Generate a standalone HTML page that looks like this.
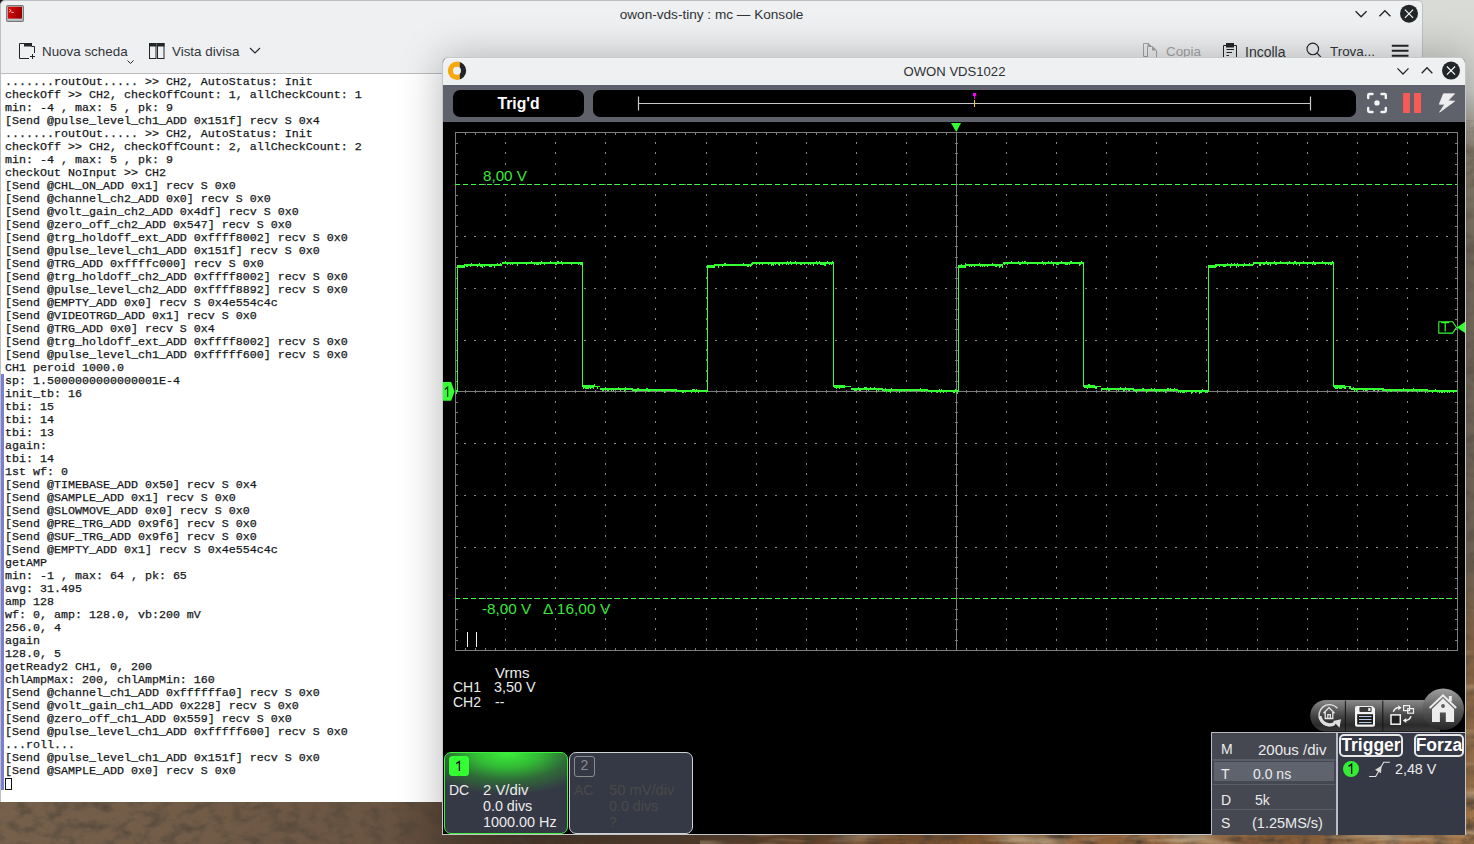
<!DOCTYPE html>
<html><head><meta charset="utf-8">
<style>
*{box-sizing:border-box}
html,body{margin:0;padding:0}
body{width:1474px;height:844px;overflow:hidden;position:relative;font-family:"Liberation Sans",sans-serif;background:#b9a58c}
.a{position:absolute;white-space:pre}
#wall{left:0;top:0;width:1474px;height:844px;
 background:linear-gradient(180deg,#d9dbd6 0px,#d2d4cf 90px,#8f8574 150px,#7b7061 260px,#776b5c 560px,#8c6a4c 640px,#a47850 760px,#a8784c 844px)}
#wallb{left:0;top:801px;width:1474px;height:43px;
 background:linear-gradient(90deg,#76604c 0px,#725c48 200px,#6a5442 380px,#4c3a2c 520px,#5a4230 700px,#7a5232 860px,#96663c 1000px,#a87448 1150px,#9a6c44 1300px,#b08050 1474px)}
#konsole{left:0;top:0;width:1423px;height:802px;background:#eff0f1;border-radius:5px 5px 0 0;overflow:hidden;border:1px solid #bdbfc2;border-bottom:none}
.tb{font-size:13.4px;color:#31363b;top:43px}
#term{left:0;top:73px;width:1422px;height:728px;background:#fff}
#term pre{margin:0;position:absolute;left:4px;top:2px;font-family:"Liberation Mono",monospace;font-size:11.67px;line-height:13px;color:#15181a;-webkit-text-stroke:0.25px #15181a}
#shadow{left:443px;top:57px;width:1022px;height:778px;border-radius:6px 6px 0 0;box-shadow:0 3px 40px 3px rgba(0,0,0,0.27)}
#osc{left:442px;top:57px;width:1024px;height:778px;background:#000;border:1px solid #c4c6c8;border-top-color:#c6c7c9;border-radius:6px 6px 0 0;overflow:hidden}
.g{color:#39e639;font-size:14.3px}
.w{color:#ececec;font-size:14px}
</style></head><body>
<div class="a" id="wall"></div>
<div class="a" id="wallb"></div>
<div class="a" style="left:0;top:0;width:6px;height:6px;background:#1a1414"></div>
<svg class="a" style="left:0;top:0" width="1474" height="844">
 <filter id="tex" x="0" y="0" width="100%" height="100%"><feTurbulence type="fractalNoise" baseFrequency="0.06 0.09" numOctaves="4" seed="5"/><feColorMatrix type="matrix" values="0 0 0 0 0.08  0 0 0 0 0.06  0 0 0 0 0.04  -2.2 0 0 0 1.25"/></filter>
 <filter id="tex2" x="0" y="0" width="100%" height="100%"><feTurbulence type="fractalNoise" baseFrequency="0.012 0.09" numOctaves="3" seed="9"/><feColorMatrix type="matrix" values="0 0 0 0 0.95  0 0 0 0 0.75  0 0 0 0 0.5  2.6 0 0 0 -1.25"/></filter>
 <rect x="0" y="795" width="1474" height="49" filter="url(#tex)" opacity="0.85"/>
 <rect x="1462" y="120" width="12" height="724" filter="url(#tex)" opacity="0.45"/>
 <rect x="700" y="830" width="774" height="14" filter="url(#tex2)" opacity="0.6"/>
 <rect x="1462" y="600" width="12" height="244" filter="url(#tex2)" opacity="0.5"/>
</svg>

<!-- ============ KONSOLE ============ -->
<div class="a" id="konsole">
  <div class="a" style="left:0;top:6px;width:1421px;text-align:center;font-size:13.6px;color:#2f3438">owon-vds-tiny : mc — Konsole</div>
  <div class="a tb" style="left:41px">Nuova scheda</div>
  <div class="a tb" style="left:171px">Vista divisa</div>
  <div class="a tb" style="left:1165px;color:#a4a7aa">Copia</div>
  <div class="a tb" style="left:1244px;font-size:14px">Incolla</div>
  <div class="a tb" style="left:1329px">Trova...</div>
  <div class="a" style="left:0;top:72px;width:1423px;height:1px;background:#b9bbbe"></div>
  <div class="a" id="term"><pre>.......routOut..... &gt;&gt; CH2, AutoStatus: Init
checkOff &gt;&gt; CH2, checkOffCount: 1, allCheckCount: 1
min: -4 , max: 5 , pk: 9
[Send @pulse_level_ch1_ADD 0x151f] recv S 0x4
.......routOut..... &gt;&gt; CH2, AutoStatus: Init
checkOff &gt;&gt; CH2, checkOffCount: 2, allCheckCount: 2
min: -4 , max: 5 , pk: 9
checkOut NoInput &gt;&gt; CH2
[Send @CHL_ON_ADD 0x1] recv S 0x0
[Send @channel_ch2_ADD 0x0] recv S 0x0
[Send @volt_gain_ch2_ADD 0x4df] recv S 0x0
[Send @zero_off_ch2_ADD 0x547] recv S 0x0
[Send @trg_holdoff_ext_ADD 0xffff8002] recv S 0x0
[Send @pulse_level_ch1_ADD 0x151f] recv S 0x0
[Send @TRG_ADD 0xffffc000] recv S 0x0
[Send @trg_holdoff_ch2_ADD 0xffff8002] recv S 0x0
[Send @pulse_level_ch2_ADD 0xffff8892] recv S 0x0
[Send @EMPTY_ADD 0x0] recv S 0x4e554c4c
[Send @VIDEOTRGD_ADD 0x1] recv S 0x0
[Send @TRG_ADD 0x0] recv S 0x4
[Send @trg_holdoff_ext_ADD 0xffff8002] recv S 0x0
[Send @pulse_level_ch1_ADD 0xfffff600] recv S 0x0
CH1 peroid 1000.0
sp: 1.5000000000000001E-4
init_tb: 16
tbi: 15
tbi: 14
tbi: 13
again:
tbi: 14
1st wf: 0
[Send @TIMEBASE_ADD 0x50] recv S 0x4
[Send @SAMPLE_ADD 0x1] recv S 0x0
[Send @SLOWMOVE_ADD 0x0] recv S 0x0
[Send @PRE_TRG_ADD 0x9f6] recv S 0x0
[Send @SUF_TRG_ADD 0x9f6] recv S 0x0
[Send @EMPTY_ADD 0x1] recv S 0x4e554c4c
getAMP
min: -1 , max: 64 , pk: 65
avg: 31.495
amp 128
wf: 0, amp: 128.0, vb:200 mV
256.0, 4
again
128.0, 5
getReady2 CH1, 0, 200
chlAmpMax: 200, chlAmpMin: 160
[Send @channel_ch1_ADD 0xffffffa0] recv S 0x0
[Send @volt_gain_ch1_ADD 0x228] recv S 0x0
[Send @zero_off_ch1_ADD 0x559] recv S 0x0
[Send @pulse_level_ch1_ADD 0xfffff600] recv S 0x0
...roll...
[Send @pulse_level_ch1_ADD 0x151f] recv S 0x0
[Send @SAMPLE_ADD 0x0] recv S 0x0</pre></div>
  <div class="a" style="left:0;top:373px;width:3px;height:416px;background:#7b7fd4"></div>
  <div class="a" style="left:4px;top:777px;width:7px;height:12px;border:1.2px solid #111"></div>
</div>

<svg class="a" style="left:0;top:0" width="1474" height="844">
 <!-- konsole title icon -->
 <defs><linearGradient id="kred" x1="0" y1="0" x2="1" y2="0.3"><stop offset="0" stop-color="#e80a0a"/><stop offset="1" stop-color="#9a0000"/></linearGradient></defs>
 <rect x="6.6" y="5.6" width="16.8" height="15.8" rx="1.2" fill="#c4c8c8" stroke="#7a7a7a" stroke-width="1.1"/>
 <rect x="7.8" y="6.8" width="14.2" height="11.8" fill="url(#kred)"/>
 <path d="M9.2 9.2L11.2 10.6L9.2 12M11.4 12.4H13.8" stroke="#fff" stroke-width="0.9" fill="none" opacity="0.9"/>
 <!-- titlebar buttons -->
 <path d="M1355.6 11.3L1361.1 16.8L1366.6 11.3" stroke="#232629" stroke-width="1.3" fill="none"/>
 <path d="M1379.4 16.2L1384.9 10.7L1390.4 16.2" stroke="#232629" stroke-width="1.3" fill="none"/>
 <circle cx="1409" cy="13.7" r="9" fill="#232629"/>
 <path d="M1404.9 9.6L1413.1 17.8M1413.1 9.6L1404.9 17.8" stroke="#fff" stroke-width="1.1"/>
 <!-- new tab icon 16x16 at 19,43 -->
 <g transform="translate(19,43)" fill="none" stroke="#232629" stroke-width="1">
  <path d="M10 15.5H0.5V0.5H5"/>
  <rect x="5" y="0" width="8" height="3.5" fill="#232629" stroke="none"/>
  <path d="M12.5 3.5H15.5V10"/>
  <path d="M13.5 11V16M11 13.5H16"/>
 </g>
 <path d="M127.5 60.5L130.5 63.5L133.5 60.5" stroke="#232629" stroke-width="1" fill="none"/>
 <!-- split view icon at 149,43 -->
 <g transform="translate(149,43)" fill="none" stroke="#232629" stroke-width="1">
  <rect x="0.5" y="0.5" width="6.5" height="15"/>
  <rect x="8.5" y="0.5" width="6.5" height="15"/>
  <rect x="0" y="0" width="7.5" height="3.5" fill="#232629" stroke="none"/>
  <rect x="8" y="0" width="7.5" height="3.5" fill="#232629" stroke="none"/>
 </g>
 <path d="M250 48L255 53L260 48" stroke="#232629" stroke-width="1.1" fill="none"/>
 <!-- copy icon (disabled) -->
 <g fill="none" stroke="#a3a6a9" stroke-width="1">
  <path d="M1148 56.5H1143.5V43.5H1148.5L1149 44"/>
  <path d="M1147.5 57V46.5H1152.5L1156.5 50.5V57"/>
  <path d="M1148.5 43.5L1151 46" />
 </g>
 <path d="M1152 46.5V50.5H1156.3Z" fill="#a3a6a9"/>
 <path d="M1148.5 43.5L1152 46.5H1147.5V44Z" fill="#a3a6a9"/>
 <!-- paste icon -->
 <g fill="none" stroke="#232629" stroke-width="1">
  <path d="M1223.5 57.5V45.5H1226M1234 45.5H1236.5V57.5"/>
  <path d="M1226.5 49.5H1234M1226.5 52.5H1232M1226.5 55.5H1229"/>
 </g>
 <rect x="1226" y="43" width="8" height="4.5" fill="#232629"/>
 <!-- search -->
 <circle cx="1312.8" cy="48.9" r="5.8" fill="none" stroke="#232629" stroke-width="1.15"/>
 <path d="M1317 53.1L1320.8 56.9" stroke="#232629" stroke-width="1.3"/>
 <!-- hamburger -->
 <path d="M1391.8 45.8H1408.5M1391.8 50.7H1408.5M1391.8 55.7H1408.5" stroke="#232629" stroke-width="1.9"/>
</svg>


<!-- ============ OSC WINDOW ============ -->
<div class="a" id="shadow"></div>
<div class="a" id="osc">
  <div class="a" style="left:0;top:0;width:1024px;height:27px;background:#eff0f1;border-top:1px solid #f4f5f6"></div>
  <div class="a" style="left:0;top:6px;width:1023px;text-align:center;font-size:13.1px;color:#2b3034">OWON VDS1022</div>
  <div class="a" style="left:0;top:27px;width:1024px;height:37px;background:#5f626b"></div>
  <div class="a" style="left:10px;top:32px;width:131px;height:27px;background:#000;border-radius:7px"></div>
  <div class="a" style="left:10px;top:37px;width:131px;text-align:center;color:#fff;font-weight:bold;font-size:15.7px">Trig'd</div>
  <div class="a" style="left:150px;top:32px;width:763px;height:27px;background:#000;border-radius:7px"></div>
</div>
<svg width="1474" height="844" style="position:absolute;left:0;top:0">
<path d="M455 132h1003v1h-1003zM455 650h1003v1h-1003zM455 132h1v519h-1zM1457 132h1v519h-1zM956 132h1v518h-1zM455 391h1002v1h-1002zM465 133h1v2h-1zM465 648h1v2h-1zM465 390h1v3h-1zM475 133h1v2h-1zM475 648h1v2h-1zM475 390h1v3h-1zM485 133h1v2h-1zM485 648h1v2h-1zM485 390h1v3h-1zM495 133h1v2h-1zM495 648h1v2h-1zM495 390h1v3h-1zM505 133h1v2h-1zM505 648h1v2h-1zM505 390h1v3h-1zM515 133h1v2h-1zM515 648h1v2h-1zM515 390h1v3h-1zM525 133h1v2h-1zM525 648h1v2h-1zM525 390h1v3h-1zM535 133h1v2h-1zM535 648h1v2h-1zM535 390h1v3h-1zM545 133h1v2h-1zM545 648h1v2h-1zM545 390h1v3h-1zM555 133h1v2h-1zM555 648h1v2h-1zM555 390h1v3h-1zM565 133h1v2h-1zM565 648h1v2h-1zM565 390h1v3h-1zM575 133h1v2h-1zM575 648h1v2h-1zM575 390h1v3h-1zM585 133h1v2h-1zM585 648h1v2h-1zM585 390h1v3h-1zM595 133h1v2h-1zM595 648h1v2h-1zM595 390h1v3h-1zM605 133h1v2h-1zM605 648h1v2h-1zM605 390h1v3h-1zM615 133h1v2h-1zM615 648h1v2h-1zM615 390h1v3h-1zM625 133h1v2h-1zM625 648h1v2h-1zM625 390h1v3h-1zM635 133h1v2h-1zM635 648h1v2h-1zM635 390h1v3h-1zM645 133h1v2h-1zM645 648h1v2h-1zM645 390h1v3h-1zM655 133h1v2h-1zM655 648h1v2h-1zM655 390h1v3h-1zM665 133h1v2h-1zM665 648h1v2h-1zM665 390h1v3h-1zM675 133h1v2h-1zM675 648h1v2h-1zM675 390h1v3h-1zM685 133h1v2h-1zM685 648h1v2h-1zM685 390h1v3h-1zM695 133h1v2h-1zM695 648h1v2h-1zM695 390h1v3h-1zM706 133h1v2h-1zM706 648h1v2h-1zM706 390h1v3h-1zM716 133h1v2h-1zM716 648h1v2h-1zM716 390h1v3h-1zM726 133h1v2h-1zM726 648h1v2h-1zM726 390h1v3h-1zM736 133h1v2h-1zM736 648h1v2h-1zM736 390h1v3h-1zM746 133h1v2h-1zM746 648h1v2h-1zM746 390h1v3h-1zM756 133h1v2h-1zM756 648h1v2h-1zM756 390h1v3h-1zM766 133h1v2h-1zM766 648h1v2h-1zM766 390h1v3h-1zM776 133h1v2h-1zM776 648h1v2h-1zM776 390h1v3h-1zM786 133h1v2h-1zM786 648h1v2h-1zM786 390h1v3h-1zM796 133h1v2h-1zM796 648h1v2h-1zM796 390h1v3h-1zM806 133h1v2h-1zM806 648h1v2h-1zM806 390h1v3h-1zM816 133h1v2h-1zM816 648h1v2h-1zM816 390h1v3h-1zM826 133h1v2h-1zM826 648h1v2h-1zM826 390h1v3h-1zM836 133h1v2h-1zM836 648h1v2h-1zM836 390h1v3h-1zM846 133h1v2h-1zM846 648h1v2h-1zM846 390h1v3h-1zM856 133h1v2h-1zM856 648h1v2h-1zM856 390h1v3h-1zM866 133h1v2h-1zM866 648h1v2h-1zM866 390h1v3h-1zM876 133h1v2h-1zM876 648h1v2h-1zM876 390h1v3h-1zM886 133h1v2h-1zM886 648h1v2h-1zM886 390h1v3h-1zM896 133h1v2h-1zM896 648h1v2h-1zM896 390h1v3h-1zM906 133h1v2h-1zM906 648h1v2h-1zM906 390h1v3h-1zM916 133h1v2h-1zM916 648h1v2h-1zM916 390h1v3h-1zM926 133h1v2h-1zM926 648h1v2h-1zM926 390h1v3h-1zM936 133h1v2h-1zM936 648h1v2h-1zM936 390h1v3h-1zM946 133h1v2h-1zM946 648h1v2h-1zM946 390h1v3h-1zM956 133h1v2h-1zM956 648h1v2h-1zM956 390h1v3h-1zM966 133h1v2h-1zM966 648h1v2h-1zM966 390h1v3h-1zM976 133h1v2h-1zM976 648h1v2h-1zM976 390h1v3h-1zM986 133h1v2h-1zM986 648h1v2h-1zM986 390h1v3h-1zM996 133h1v2h-1zM996 648h1v2h-1zM996 390h1v3h-1zM1006 133h1v2h-1zM1006 648h1v2h-1zM1006 390h1v3h-1zM1016 133h1v2h-1zM1016 648h1v2h-1zM1016 390h1v3h-1zM1026 133h1v2h-1zM1026 648h1v2h-1zM1026 390h1v3h-1zM1036 133h1v2h-1zM1036 648h1v2h-1zM1036 390h1v3h-1zM1046 133h1v2h-1zM1046 648h1v2h-1zM1046 390h1v3h-1zM1056 133h1v2h-1zM1056 648h1v2h-1zM1056 390h1v3h-1zM1066 133h1v2h-1zM1066 648h1v2h-1zM1066 390h1v3h-1zM1076 133h1v2h-1zM1076 648h1v2h-1zM1076 390h1v3h-1zM1086 133h1v2h-1zM1086 648h1v2h-1zM1086 390h1v3h-1zM1096 133h1v2h-1zM1096 648h1v2h-1zM1096 390h1v3h-1zM1106 133h1v2h-1zM1106 648h1v2h-1zM1106 390h1v3h-1zM1116 133h1v2h-1zM1116 648h1v2h-1zM1116 390h1v3h-1zM1126 133h1v2h-1zM1126 648h1v2h-1zM1126 390h1v3h-1zM1136 133h1v2h-1zM1136 648h1v2h-1zM1136 390h1v3h-1zM1146 133h1v2h-1zM1146 648h1v2h-1zM1146 390h1v3h-1zM1156 133h1v2h-1zM1156 648h1v2h-1zM1156 390h1v3h-1zM1166 133h1v2h-1zM1166 648h1v2h-1zM1166 390h1v3h-1zM1176 133h1v2h-1zM1176 648h1v2h-1zM1176 390h1v3h-1zM1186 133h1v2h-1zM1186 648h1v2h-1zM1186 390h1v3h-1zM1196 133h1v2h-1zM1196 648h1v2h-1zM1196 390h1v3h-1zM1206 133h1v2h-1zM1206 648h1v2h-1zM1206 390h1v3h-1zM1217 133h1v2h-1zM1217 648h1v2h-1zM1217 390h1v3h-1zM1227 133h1v2h-1zM1227 648h1v2h-1zM1227 390h1v3h-1zM1237 133h1v2h-1zM1237 648h1v2h-1zM1237 390h1v3h-1zM1247 133h1v2h-1zM1247 648h1v2h-1zM1247 390h1v3h-1zM1257 133h1v2h-1zM1257 648h1v2h-1zM1257 390h1v3h-1zM1267 133h1v2h-1zM1267 648h1v2h-1zM1267 390h1v3h-1zM1277 133h1v2h-1zM1277 648h1v2h-1zM1277 390h1v3h-1zM1287 133h1v2h-1zM1287 648h1v2h-1zM1287 390h1v3h-1zM1297 133h1v2h-1zM1297 648h1v2h-1zM1297 390h1v3h-1zM1307 133h1v2h-1zM1307 648h1v2h-1zM1307 390h1v3h-1zM1317 133h1v2h-1zM1317 648h1v2h-1zM1317 390h1v3h-1zM1327 133h1v2h-1zM1327 648h1v2h-1zM1327 390h1v3h-1zM1337 133h1v2h-1zM1337 648h1v2h-1zM1337 390h1v3h-1zM1347 133h1v2h-1zM1347 648h1v2h-1zM1347 390h1v3h-1zM1357 133h1v2h-1zM1357 648h1v2h-1zM1357 390h1v3h-1zM1367 133h1v2h-1zM1367 648h1v2h-1zM1367 390h1v3h-1zM1377 133h1v2h-1zM1377 648h1v2h-1zM1377 390h1v3h-1zM1387 133h1v2h-1zM1387 648h1v2h-1zM1387 390h1v3h-1zM1397 133h1v2h-1zM1397 648h1v2h-1zM1397 390h1v3h-1zM1407 133h1v2h-1zM1407 648h1v2h-1zM1407 390h1v3h-1zM1417 133h1v2h-1zM1417 648h1v2h-1zM1417 390h1v3h-1zM1427 133h1v2h-1zM1427 648h1v2h-1zM1427 390h1v3h-1zM1437 133h1v2h-1zM1437 648h1v2h-1zM1437 390h1v3h-1zM1447 133h1v2h-1zM1447 648h1v2h-1zM1447 390h1v3h-1zM456 143h2v1h-2zM1455 143h2v1h-2zM955 143h3v1h-3zM456 153h2v1h-2zM1455 153h2v1h-2zM955 153h3v1h-3zM456 164h2v1h-2zM1455 164h2v1h-2zM955 164h3v1h-3zM456 174h2v1h-2zM1455 174h2v1h-2zM955 174h3v1h-3zM456 184h2v1h-2zM1455 184h2v1h-2zM955 184h3v1h-3zM456 195h2v1h-2zM1455 195h2v1h-2zM955 195h3v1h-3zM456 205h2v1h-2zM1455 205h2v1h-2zM955 205h3v1h-3zM456 215h2v1h-2zM1455 215h2v1h-2zM955 215h3v1h-3zM456 226h2v1h-2zM1455 226h2v1h-2zM955 226h3v1h-3zM456 236h2v1h-2zM1455 236h2v1h-2zM955 236h3v1h-3zM456 246h2v1h-2zM1455 246h2v1h-2zM955 246h3v1h-3zM456 257h2v1h-2zM1455 257h2v1h-2zM955 257h3v1h-3zM456 267h2v1h-2zM1455 267h2v1h-2zM955 267h3v1h-3zM456 278h2v1h-2zM1455 278h2v1h-2zM955 278h3v1h-3zM456 288h2v1h-2zM1455 288h2v1h-2zM955 288h3v1h-3zM456 298h2v1h-2zM1455 298h2v1h-2zM955 298h3v1h-3zM456 309h2v1h-2zM1455 309h2v1h-2zM955 309h3v1h-3zM456 319h2v1h-2zM1455 319h2v1h-2zM955 319h3v1h-3zM456 329h2v1h-2zM1455 329h2v1h-2zM955 329h3v1h-3zM456 340h2v1h-2zM1455 340h2v1h-2zM955 340h3v1h-3zM456 350h2v1h-2zM1455 350h2v1h-2zM955 350h3v1h-3zM456 360h2v1h-2zM1455 360h2v1h-2zM955 360h3v1h-3zM456 371h2v1h-2zM1455 371h2v1h-2zM955 371h3v1h-3zM456 381h2v1h-2zM1455 381h2v1h-2zM955 381h3v1h-3zM456 391h2v1h-2zM1455 391h2v1h-2zM955 391h3v1h-3zM456 402h2v1h-2zM1455 402h2v1h-2zM955 402h3v1h-3zM456 412h2v1h-2zM1455 412h2v1h-2zM955 412h3v1h-3zM456 422h2v1h-2zM1455 422h2v1h-2zM955 422h3v1h-3zM456 433h2v1h-2zM1455 433h2v1h-2zM955 433h3v1h-3zM456 443h2v1h-2zM1455 443h2v1h-2zM955 443h3v1h-3zM456 453h2v1h-2zM1455 453h2v1h-2zM955 453h3v1h-3zM456 464h2v1h-2zM1455 464h2v1h-2zM955 464h3v1h-3zM456 474h2v1h-2zM1455 474h2v1h-2zM955 474h3v1h-3zM456 485h2v1h-2zM1455 485h2v1h-2zM955 485h3v1h-3zM456 495h2v1h-2zM1455 495h2v1h-2zM955 495h3v1h-3zM456 505h2v1h-2zM1455 505h2v1h-2zM955 505h3v1h-3zM456 516h2v1h-2zM1455 516h2v1h-2zM955 516h3v1h-3zM456 526h2v1h-2zM1455 526h2v1h-2zM955 526h3v1h-3zM456 536h2v1h-2zM1455 536h2v1h-2zM955 536h3v1h-3zM456 547h2v1h-2zM1455 547h2v1h-2zM955 547h3v1h-3zM456 557h2v1h-2zM1455 557h2v1h-2zM955 557h3v1h-3zM456 567h2v1h-2zM1455 567h2v1h-2zM955 567h3v1h-3zM456 578h2v1h-2zM1455 578h2v1h-2zM955 578h3v1h-3zM456 588h2v1h-2zM1455 588h2v1h-2zM955 588h3v1h-3zM456 598h2v1h-2zM1455 598h2v1h-2zM955 598h3v1h-3zM456 609h2v1h-2zM1455 609h2v1h-2zM955 609h3v1h-3zM456 619h2v1h-2zM1455 619h2v1h-2zM955 619h3v1h-3zM456 629h2v1h-2zM1455 629h2v1h-2zM955 629h3v1h-3zM456 640h2v1h-2zM1455 640h2v1h-2zM955 640h3v1h-3z" fill="#7c7c7c" shape-rendering="crispEdges"/>
<path d="M505 142h1v2h-1zM505 152h1v2h-1zM505 163h1v2h-1zM505 173h1v2h-1zM505 194h1v2h-1zM505 204h1v2h-1zM505 214h1v2h-1zM505 225h1v2h-1zM505 245h1v2h-1zM505 256h1v2h-1zM505 266h1v2h-1zM505 277h1v2h-1zM505 297h1v2h-1zM505 308h1v2h-1zM505 318h1v2h-1zM505 328h1v2h-1zM505 349h1v2h-1zM505 359h1v2h-1zM505 370h1v2h-1zM505 380h1v2h-1zM505 401h1v2h-1zM505 411h1v2h-1zM505 421h1v2h-1zM505 432h1v2h-1zM505 452h1v2h-1zM505 463h1v2h-1zM505 473h1v2h-1zM505 484h1v2h-1zM505 504h1v2h-1zM505 515h1v2h-1zM505 525h1v2h-1zM505 535h1v2h-1zM505 556h1v2h-1zM505 566h1v2h-1zM505 577h1v2h-1zM505 587h1v2h-1zM505 608h1v2h-1zM505 618h1v2h-1zM505 628h1v2h-1zM505 639h1v2h-1zM555 142h1v2h-1zM555 152h1v2h-1zM555 163h1v2h-1zM555 173h1v2h-1zM555 194h1v2h-1zM555 204h1v2h-1zM555 214h1v2h-1zM555 225h1v2h-1zM555 245h1v2h-1zM555 256h1v2h-1zM555 266h1v2h-1zM555 277h1v2h-1zM555 297h1v2h-1zM555 308h1v2h-1zM555 318h1v2h-1zM555 328h1v2h-1zM555 349h1v2h-1zM555 359h1v2h-1zM555 370h1v2h-1zM555 380h1v2h-1zM555 401h1v2h-1zM555 411h1v2h-1zM555 421h1v2h-1zM555 432h1v2h-1zM555 452h1v2h-1zM555 463h1v2h-1zM555 473h1v2h-1zM555 484h1v2h-1zM555 504h1v2h-1zM555 515h1v2h-1zM555 525h1v2h-1zM555 535h1v2h-1zM555 556h1v2h-1zM555 566h1v2h-1zM555 577h1v2h-1zM555 587h1v2h-1zM555 608h1v2h-1zM555 618h1v2h-1zM555 628h1v2h-1zM555 639h1v2h-1zM605 142h1v2h-1zM605 152h1v2h-1zM605 163h1v2h-1zM605 173h1v2h-1zM605 194h1v2h-1zM605 204h1v2h-1zM605 214h1v2h-1zM605 225h1v2h-1zM605 245h1v2h-1zM605 256h1v2h-1zM605 266h1v2h-1zM605 277h1v2h-1zM605 297h1v2h-1zM605 308h1v2h-1zM605 318h1v2h-1zM605 328h1v2h-1zM605 349h1v2h-1zM605 359h1v2h-1zM605 370h1v2h-1zM605 380h1v2h-1zM605 401h1v2h-1zM605 411h1v2h-1zM605 421h1v2h-1zM605 432h1v2h-1zM605 452h1v2h-1zM605 463h1v2h-1zM605 473h1v2h-1zM605 484h1v2h-1zM605 504h1v2h-1zM605 515h1v2h-1zM605 525h1v2h-1zM605 535h1v2h-1zM605 556h1v2h-1zM605 566h1v2h-1zM605 577h1v2h-1zM605 587h1v2h-1zM605 608h1v2h-1zM605 618h1v2h-1zM605 628h1v2h-1zM605 639h1v2h-1zM655 142h1v2h-1zM655 152h1v2h-1zM655 163h1v2h-1zM655 173h1v2h-1zM655 194h1v2h-1zM655 204h1v2h-1zM655 214h1v2h-1zM655 225h1v2h-1zM655 245h1v2h-1zM655 256h1v2h-1zM655 266h1v2h-1zM655 277h1v2h-1zM655 297h1v2h-1zM655 308h1v2h-1zM655 318h1v2h-1zM655 328h1v2h-1zM655 349h1v2h-1zM655 359h1v2h-1zM655 370h1v2h-1zM655 380h1v2h-1zM655 401h1v2h-1zM655 411h1v2h-1zM655 421h1v2h-1zM655 432h1v2h-1zM655 452h1v2h-1zM655 463h1v2h-1zM655 473h1v2h-1zM655 484h1v2h-1zM655 504h1v2h-1zM655 515h1v2h-1zM655 525h1v2h-1zM655 535h1v2h-1zM655 556h1v2h-1zM655 566h1v2h-1zM655 577h1v2h-1zM655 587h1v2h-1zM655 608h1v2h-1zM655 618h1v2h-1zM655 628h1v2h-1zM655 639h1v2h-1zM706 142h1v2h-1zM706 152h1v2h-1zM706 163h1v2h-1zM706 173h1v2h-1zM706 194h1v2h-1zM706 204h1v2h-1zM706 214h1v2h-1zM706 225h1v2h-1zM706 245h1v2h-1zM706 256h1v2h-1zM706 266h1v2h-1zM706 277h1v2h-1zM706 297h1v2h-1zM706 308h1v2h-1zM706 318h1v2h-1zM706 328h1v2h-1zM706 349h1v2h-1zM706 359h1v2h-1zM706 370h1v2h-1zM706 380h1v2h-1zM706 401h1v2h-1zM706 411h1v2h-1zM706 421h1v2h-1zM706 432h1v2h-1zM706 452h1v2h-1zM706 463h1v2h-1zM706 473h1v2h-1zM706 484h1v2h-1zM706 504h1v2h-1zM706 515h1v2h-1zM706 525h1v2h-1zM706 535h1v2h-1zM706 556h1v2h-1zM706 566h1v2h-1zM706 577h1v2h-1zM706 587h1v2h-1zM706 608h1v2h-1zM706 618h1v2h-1zM706 628h1v2h-1zM706 639h1v2h-1zM756 142h1v2h-1zM756 152h1v2h-1zM756 163h1v2h-1zM756 173h1v2h-1zM756 194h1v2h-1zM756 204h1v2h-1zM756 214h1v2h-1zM756 225h1v2h-1zM756 245h1v2h-1zM756 256h1v2h-1zM756 266h1v2h-1zM756 277h1v2h-1zM756 297h1v2h-1zM756 308h1v2h-1zM756 318h1v2h-1zM756 328h1v2h-1zM756 349h1v2h-1zM756 359h1v2h-1zM756 370h1v2h-1zM756 380h1v2h-1zM756 401h1v2h-1zM756 411h1v2h-1zM756 421h1v2h-1zM756 432h1v2h-1zM756 452h1v2h-1zM756 463h1v2h-1zM756 473h1v2h-1zM756 484h1v2h-1zM756 504h1v2h-1zM756 515h1v2h-1zM756 525h1v2h-1zM756 535h1v2h-1zM756 556h1v2h-1zM756 566h1v2h-1zM756 577h1v2h-1zM756 587h1v2h-1zM756 608h1v2h-1zM756 618h1v2h-1zM756 628h1v2h-1zM756 639h1v2h-1zM806 142h1v2h-1zM806 152h1v2h-1zM806 163h1v2h-1zM806 173h1v2h-1zM806 194h1v2h-1zM806 204h1v2h-1zM806 214h1v2h-1zM806 225h1v2h-1zM806 245h1v2h-1zM806 256h1v2h-1zM806 266h1v2h-1zM806 277h1v2h-1zM806 297h1v2h-1zM806 308h1v2h-1zM806 318h1v2h-1zM806 328h1v2h-1zM806 349h1v2h-1zM806 359h1v2h-1zM806 370h1v2h-1zM806 380h1v2h-1zM806 401h1v2h-1zM806 411h1v2h-1zM806 421h1v2h-1zM806 432h1v2h-1zM806 452h1v2h-1zM806 463h1v2h-1zM806 473h1v2h-1zM806 484h1v2h-1zM806 504h1v2h-1zM806 515h1v2h-1zM806 525h1v2h-1zM806 535h1v2h-1zM806 556h1v2h-1zM806 566h1v2h-1zM806 577h1v2h-1zM806 587h1v2h-1zM806 608h1v2h-1zM806 618h1v2h-1zM806 628h1v2h-1zM806 639h1v2h-1zM856 142h1v2h-1zM856 152h1v2h-1zM856 163h1v2h-1zM856 173h1v2h-1zM856 194h1v2h-1zM856 204h1v2h-1zM856 214h1v2h-1zM856 225h1v2h-1zM856 245h1v2h-1zM856 256h1v2h-1zM856 266h1v2h-1zM856 277h1v2h-1zM856 297h1v2h-1zM856 308h1v2h-1zM856 318h1v2h-1zM856 328h1v2h-1zM856 349h1v2h-1zM856 359h1v2h-1zM856 370h1v2h-1zM856 380h1v2h-1zM856 401h1v2h-1zM856 411h1v2h-1zM856 421h1v2h-1zM856 432h1v2h-1zM856 452h1v2h-1zM856 463h1v2h-1zM856 473h1v2h-1zM856 484h1v2h-1zM856 504h1v2h-1zM856 515h1v2h-1zM856 525h1v2h-1zM856 535h1v2h-1zM856 556h1v2h-1zM856 566h1v2h-1zM856 577h1v2h-1zM856 587h1v2h-1zM856 608h1v2h-1zM856 618h1v2h-1zM856 628h1v2h-1zM856 639h1v2h-1zM906 142h1v2h-1zM906 152h1v2h-1zM906 163h1v2h-1zM906 173h1v2h-1zM906 194h1v2h-1zM906 204h1v2h-1zM906 214h1v2h-1zM906 225h1v2h-1zM906 245h1v2h-1zM906 256h1v2h-1zM906 266h1v2h-1zM906 277h1v2h-1zM906 297h1v2h-1zM906 308h1v2h-1zM906 318h1v2h-1zM906 328h1v2h-1zM906 349h1v2h-1zM906 359h1v2h-1zM906 370h1v2h-1zM906 380h1v2h-1zM906 401h1v2h-1zM906 411h1v2h-1zM906 421h1v2h-1zM906 432h1v2h-1zM906 452h1v2h-1zM906 463h1v2h-1zM906 473h1v2h-1zM906 484h1v2h-1zM906 504h1v2h-1zM906 515h1v2h-1zM906 525h1v2h-1zM906 535h1v2h-1zM906 556h1v2h-1zM906 566h1v2h-1zM906 577h1v2h-1zM906 587h1v2h-1zM906 608h1v2h-1zM906 618h1v2h-1zM906 628h1v2h-1zM906 639h1v2h-1zM1006 142h1v2h-1zM1006 152h1v2h-1zM1006 163h1v2h-1zM1006 173h1v2h-1zM1006 194h1v2h-1zM1006 204h1v2h-1zM1006 214h1v2h-1zM1006 225h1v2h-1zM1006 245h1v2h-1zM1006 256h1v2h-1zM1006 266h1v2h-1zM1006 277h1v2h-1zM1006 297h1v2h-1zM1006 308h1v2h-1zM1006 318h1v2h-1zM1006 328h1v2h-1zM1006 349h1v2h-1zM1006 359h1v2h-1zM1006 370h1v2h-1zM1006 380h1v2h-1zM1006 401h1v2h-1zM1006 411h1v2h-1zM1006 421h1v2h-1zM1006 432h1v2h-1zM1006 452h1v2h-1zM1006 463h1v2h-1zM1006 473h1v2h-1zM1006 484h1v2h-1zM1006 504h1v2h-1zM1006 515h1v2h-1zM1006 525h1v2h-1zM1006 535h1v2h-1zM1006 556h1v2h-1zM1006 566h1v2h-1zM1006 577h1v2h-1zM1006 587h1v2h-1zM1006 608h1v2h-1zM1006 618h1v2h-1zM1006 628h1v2h-1zM1006 639h1v2h-1zM1056 142h1v2h-1zM1056 152h1v2h-1zM1056 163h1v2h-1zM1056 173h1v2h-1zM1056 194h1v2h-1zM1056 204h1v2h-1zM1056 214h1v2h-1zM1056 225h1v2h-1zM1056 245h1v2h-1zM1056 256h1v2h-1zM1056 266h1v2h-1zM1056 277h1v2h-1zM1056 297h1v2h-1zM1056 308h1v2h-1zM1056 318h1v2h-1zM1056 328h1v2h-1zM1056 349h1v2h-1zM1056 359h1v2h-1zM1056 370h1v2h-1zM1056 380h1v2h-1zM1056 401h1v2h-1zM1056 411h1v2h-1zM1056 421h1v2h-1zM1056 432h1v2h-1zM1056 452h1v2h-1zM1056 463h1v2h-1zM1056 473h1v2h-1zM1056 484h1v2h-1zM1056 504h1v2h-1zM1056 515h1v2h-1zM1056 525h1v2h-1zM1056 535h1v2h-1zM1056 556h1v2h-1zM1056 566h1v2h-1zM1056 577h1v2h-1zM1056 587h1v2h-1zM1056 608h1v2h-1zM1056 618h1v2h-1zM1056 628h1v2h-1zM1056 639h1v2h-1zM1106 142h1v2h-1zM1106 152h1v2h-1zM1106 163h1v2h-1zM1106 173h1v2h-1zM1106 194h1v2h-1zM1106 204h1v2h-1zM1106 214h1v2h-1zM1106 225h1v2h-1zM1106 245h1v2h-1zM1106 256h1v2h-1zM1106 266h1v2h-1zM1106 277h1v2h-1zM1106 297h1v2h-1zM1106 308h1v2h-1zM1106 318h1v2h-1zM1106 328h1v2h-1zM1106 349h1v2h-1zM1106 359h1v2h-1zM1106 370h1v2h-1zM1106 380h1v2h-1zM1106 401h1v2h-1zM1106 411h1v2h-1zM1106 421h1v2h-1zM1106 432h1v2h-1zM1106 452h1v2h-1zM1106 463h1v2h-1zM1106 473h1v2h-1zM1106 484h1v2h-1zM1106 504h1v2h-1zM1106 515h1v2h-1zM1106 525h1v2h-1zM1106 535h1v2h-1zM1106 556h1v2h-1zM1106 566h1v2h-1zM1106 577h1v2h-1zM1106 587h1v2h-1zM1106 608h1v2h-1zM1106 618h1v2h-1zM1106 628h1v2h-1zM1106 639h1v2h-1zM1156 142h1v2h-1zM1156 152h1v2h-1zM1156 163h1v2h-1zM1156 173h1v2h-1zM1156 194h1v2h-1zM1156 204h1v2h-1zM1156 214h1v2h-1zM1156 225h1v2h-1zM1156 245h1v2h-1zM1156 256h1v2h-1zM1156 266h1v2h-1zM1156 277h1v2h-1zM1156 297h1v2h-1zM1156 308h1v2h-1zM1156 318h1v2h-1zM1156 328h1v2h-1zM1156 349h1v2h-1zM1156 359h1v2h-1zM1156 370h1v2h-1zM1156 380h1v2h-1zM1156 401h1v2h-1zM1156 411h1v2h-1zM1156 421h1v2h-1zM1156 432h1v2h-1zM1156 452h1v2h-1zM1156 463h1v2h-1zM1156 473h1v2h-1zM1156 484h1v2h-1zM1156 504h1v2h-1zM1156 515h1v2h-1zM1156 525h1v2h-1zM1156 535h1v2h-1zM1156 556h1v2h-1zM1156 566h1v2h-1zM1156 577h1v2h-1zM1156 587h1v2h-1zM1156 608h1v2h-1zM1156 618h1v2h-1zM1156 628h1v2h-1zM1156 639h1v2h-1zM1206 142h1v2h-1zM1206 152h1v2h-1zM1206 163h1v2h-1zM1206 173h1v2h-1zM1206 194h1v2h-1zM1206 204h1v2h-1zM1206 214h1v2h-1zM1206 225h1v2h-1zM1206 245h1v2h-1zM1206 256h1v2h-1zM1206 266h1v2h-1zM1206 277h1v2h-1zM1206 297h1v2h-1zM1206 308h1v2h-1zM1206 318h1v2h-1zM1206 328h1v2h-1zM1206 349h1v2h-1zM1206 359h1v2h-1zM1206 370h1v2h-1zM1206 380h1v2h-1zM1206 401h1v2h-1zM1206 411h1v2h-1zM1206 421h1v2h-1zM1206 432h1v2h-1zM1206 452h1v2h-1zM1206 463h1v2h-1zM1206 473h1v2h-1zM1206 484h1v2h-1zM1206 504h1v2h-1zM1206 515h1v2h-1zM1206 525h1v2h-1zM1206 535h1v2h-1zM1206 556h1v2h-1zM1206 566h1v2h-1zM1206 577h1v2h-1zM1206 587h1v2h-1zM1206 608h1v2h-1zM1206 618h1v2h-1zM1206 628h1v2h-1zM1206 639h1v2h-1zM1257 142h1v2h-1zM1257 152h1v2h-1zM1257 163h1v2h-1zM1257 173h1v2h-1zM1257 194h1v2h-1zM1257 204h1v2h-1zM1257 214h1v2h-1zM1257 225h1v2h-1zM1257 245h1v2h-1zM1257 256h1v2h-1zM1257 266h1v2h-1zM1257 277h1v2h-1zM1257 297h1v2h-1zM1257 308h1v2h-1zM1257 318h1v2h-1zM1257 328h1v2h-1zM1257 349h1v2h-1zM1257 359h1v2h-1zM1257 370h1v2h-1zM1257 380h1v2h-1zM1257 401h1v2h-1zM1257 411h1v2h-1zM1257 421h1v2h-1zM1257 432h1v2h-1zM1257 452h1v2h-1zM1257 463h1v2h-1zM1257 473h1v2h-1zM1257 484h1v2h-1zM1257 504h1v2h-1zM1257 515h1v2h-1zM1257 525h1v2h-1zM1257 535h1v2h-1zM1257 556h1v2h-1zM1257 566h1v2h-1zM1257 577h1v2h-1zM1257 587h1v2h-1zM1257 608h1v2h-1zM1257 618h1v2h-1zM1257 628h1v2h-1zM1257 639h1v2h-1zM1307 142h1v2h-1zM1307 152h1v2h-1zM1307 163h1v2h-1zM1307 173h1v2h-1zM1307 194h1v2h-1zM1307 204h1v2h-1zM1307 214h1v2h-1zM1307 225h1v2h-1zM1307 245h1v2h-1zM1307 256h1v2h-1zM1307 266h1v2h-1zM1307 277h1v2h-1zM1307 297h1v2h-1zM1307 308h1v2h-1zM1307 318h1v2h-1zM1307 328h1v2h-1zM1307 349h1v2h-1zM1307 359h1v2h-1zM1307 370h1v2h-1zM1307 380h1v2h-1zM1307 401h1v2h-1zM1307 411h1v2h-1zM1307 421h1v2h-1zM1307 432h1v2h-1zM1307 452h1v2h-1zM1307 463h1v2h-1zM1307 473h1v2h-1zM1307 484h1v2h-1zM1307 504h1v2h-1zM1307 515h1v2h-1zM1307 525h1v2h-1zM1307 535h1v2h-1zM1307 556h1v2h-1zM1307 566h1v2h-1zM1307 577h1v2h-1zM1307 587h1v2h-1zM1307 608h1v2h-1zM1307 618h1v2h-1zM1307 628h1v2h-1zM1307 639h1v2h-1zM1357 142h1v2h-1zM1357 152h1v2h-1zM1357 163h1v2h-1zM1357 173h1v2h-1zM1357 194h1v2h-1zM1357 204h1v2h-1zM1357 214h1v2h-1zM1357 225h1v2h-1zM1357 245h1v2h-1zM1357 256h1v2h-1zM1357 266h1v2h-1zM1357 277h1v2h-1zM1357 297h1v2h-1zM1357 308h1v2h-1zM1357 318h1v2h-1zM1357 328h1v2h-1zM1357 349h1v2h-1zM1357 359h1v2h-1zM1357 370h1v2h-1zM1357 380h1v2h-1zM1357 401h1v2h-1zM1357 411h1v2h-1zM1357 421h1v2h-1zM1357 432h1v2h-1zM1357 452h1v2h-1zM1357 463h1v2h-1zM1357 473h1v2h-1zM1357 484h1v2h-1zM1357 504h1v2h-1zM1357 515h1v2h-1zM1357 525h1v2h-1zM1357 535h1v2h-1zM1357 556h1v2h-1zM1357 566h1v2h-1zM1357 577h1v2h-1zM1357 587h1v2h-1zM1357 608h1v2h-1zM1357 618h1v2h-1zM1357 628h1v2h-1zM1357 639h1v2h-1zM1407 142h1v2h-1zM1407 152h1v2h-1zM1407 163h1v2h-1zM1407 173h1v2h-1zM1407 194h1v2h-1zM1407 204h1v2h-1zM1407 214h1v2h-1zM1407 225h1v2h-1zM1407 245h1v2h-1zM1407 256h1v2h-1zM1407 266h1v2h-1zM1407 277h1v2h-1zM1407 297h1v2h-1zM1407 308h1v2h-1zM1407 318h1v2h-1zM1407 328h1v2h-1zM1407 349h1v2h-1zM1407 359h1v2h-1zM1407 370h1v2h-1zM1407 380h1v2h-1zM1407 401h1v2h-1zM1407 411h1v2h-1zM1407 421h1v2h-1zM1407 432h1v2h-1zM1407 452h1v2h-1zM1407 463h1v2h-1zM1407 473h1v2h-1zM1407 484h1v2h-1zM1407 504h1v2h-1zM1407 515h1v2h-1zM1407 525h1v2h-1zM1407 535h1v2h-1zM1407 556h1v2h-1zM1407 566h1v2h-1zM1407 577h1v2h-1zM1407 587h1v2h-1zM1407 608h1v2h-1zM1407 618h1v2h-1zM1407 628h1v2h-1zM1407 639h1v2h-1zM464 184h2v1h-2zM474 184h2v1h-2zM484 184h2v1h-2zM494 184h2v1h-2zM504 184h2v1h-2zM514 184h2v1h-2zM524 184h2v1h-2zM534 184h2v1h-2zM544 184h2v1h-2zM554 184h2v1h-2zM564 184h2v1h-2zM574 184h2v1h-2zM584 184h2v1h-2zM594 184h2v1h-2zM604 184h2v1h-2zM614 184h2v1h-2zM624 184h2v1h-2zM634 184h2v1h-2zM644 184h2v1h-2zM654 184h2v1h-2zM664 184h2v1h-2zM674 184h2v1h-2zM684 184h2v1h-2zM694 184h2v1h-2zM705 184h2v1h-2zM715 184h2v1h-2zM725 184h2v1h-2zM735 184h2v1h-2zM745 184h2v1h-2zM755 184h2v1h-2zM765 184h2v1h-2zM775 184h2v1h-2zM785 184h2v1h-2zM795 184h2v1h-2zM805 184h2v1h-2zM815 184h2v1h-2zM825 184h2v1h-2zM835 184h2v1h-2zM845 184h2v1h-2zM855 184h2v1h-2zM865 184h2v1h-2zM875 184h2v1h-2zM885 184h2v1h-2zM895 184h2v1h-2zM905 184h2v1h-2zM915 184h2v1h-2zM925 184h2v1h-2zM935 184h2v1h-2zM945 184h2v1h-2zM955 184h2v1h-2zM965 184h2v1h-2zM975 184h2v1h-2zM985 184h2v1h-2zM995 184h2v1h-2zM1005 184h2v1h-2zM1015 184h2v1h-2zM1025 184h2v1h-2zM1035 184h2v1h-2zM1045 184h2v1h-2zM1055 184h2v1h-2zM1065 184h2v1h-2zM1075 184h2v1h-2zM1085 184h2v1h-2zM1095 184h2v1h-2zM1105 184h2v1h-2zM1115 184h2v1h-2zM1125 184h2v1h-2zM1135 184h2v1h-2zM1145 184h2v1h-2zM1155 184h2v1h-2zM1165 184h2v1h-2zM1175 184h2v1h-2zM1185 184h2v1h-2zM1195 184h2v1h-2zM1205 184h2v1h-2zM1216 184h2v1h-2zM1226 184h2v1h-2zM1236 184h2v1h-2zM1246 184h2v1h-2zM1256 184h2v1h-2zM1266 184h2v1h-2zM1276 184h2v1h-2zM1286 184h2v1h-2zM1296 184h2v1h-2zM1306 184h2v1h-2zM1316 184h2v1h-2zM1326 184h2v1h-2zM1336 184h2v1h-2zM1346 184h2v1h-2zM1356 184h2v1h-2zM1366 184h2v1h-2zM1376 184h2v1h-2zM1386 184h2v1h-2zM1396 184h2v1h-2zM1406 184h2v1h-2zM1416 184h2v1h-2zM1426 184h2v1h-2zM1436 184h2v1h-2zM1446 184h2v1h-2zM464 236h2v1h-2zM474 236h2v1h-2zM484 236h2v1h-2zM494 236h2v1h-2zM504 236h2v1h-2zM514 236h2v1h-2zM524 236h2v1h-2zM534 236h2v1h-2zM544 236h2v1h-2zM554 236h2v1h-2zM564 236h2v1h-2zM574 236h2v1h-2zM584 236h2v1h-2zM594 236h2v1h-2zM604 236h2v1h-2zM614 236h2v1h-2zM624 236h2v1h-2zM634 236h2v1h-2zM644 236h2v1h-2zM654 236h2v1h-2zM664 236h2v1h-2zM674 236h2v1h-2zM684 236h2v1h-2zM694 236h2v1h-2zM705 236h2v1h-2zM715 236h2v1h-2zM725 236h2v1h-2zM735 236h2v1h-2zM745 236h2v1h-2zM755 236h2v1h-2zM765 236h2v1h-2zM775 236h2v1h-2zM785 236h2v1h-2zM795 236h2v1h-2zM805 236h2v1h-2zM815 236h2v1h-2zM825 236h2v1h-2zM835 236h2v1h-2zM845 236h2v1h-2zM855 236h2v1h-2zM865 236h2v1h-2zM875 236h2v1h-2zM885 236h2v1h-2zM895 236h2v1h-2zM905 236h2v1h-2zM915 236h2v1h-2zM925 236h2v1h-2zM935 236h2v1h-2zM945 236h2v1h-2zM955 236h2v1h-2zM965 236h2v1h-2zM975 236h2v1h-2zM985 236h2v1h-2zM995 236h2v1h-2zM1005 236h2v1h-2zM1015 236h2v1h-2zM1025 236h2v1h-2zM1035 236h2v1h-2zM1045 236h2v1h-2zM1055 236h2v1h-2zM1065 236h2v1h-2zM1075 236h2v1h-2zM1085 236h2v1h-2zM1095 236h2v1h-2zM1105 236h2v1h-2zM1115 236h2v1h-2zM1125 236h2v1h-2zM1135 236h2v1h-2zM1145 236h2v1h-2zM1155 236h2v1h-2zM1165 236h2v1h-2zM1175 236h2v1h-2zM1185 236h2v1h-2zM1195 236h2v1h-2zM1205 236h2v1h-2zM1216 236h2v1h-2zM1226 236h2v1h-2zM1236 236h2v1h-2zM1246 236h2v1h-2zM1256 236h2v1h-2zM1266 236h2v1h-2zM1276 236h2v1h-2zM1286 236h2v1h-2zM1296 236h2v1h-2zM1306 236h2v1h-2zM1316 236h2v1h-2zM1326 236h2v1h-2zM1336 236h2v1h-2zM1346 236h2v1h-2zM1356 236h2v1h-2zM1366 236h2v1h-2zM1376 236h2v1h-2zM1386 236h2v1h-2zM1396 236h2v1h-2zM1406 236h2v1h-2zM1416 236h2v1h-2zM1426 236h2v1h-2zM1436 236h2v1h-2zM1446 236h2v1h-2zM464 288h2v1h-2zM474 288h2v1h-2zM484 288h2v1h-2zM494 288h2v1h-2zM504 288h2v1h-2zM514 288h2v1h-2zM524 288h2v1h-2zM534 288h2v1h-2zM544 288h2v1h-2zM554 288h2v1h-2zM564 288h2v1h-2zM574 288h2v1h-2zM584 288h2v1h-2zM594 288h2v1h-2zM604 288h2v1h-2zM614 288h2v1h-2zM624 288h2v1h-2zM634 288h2v1h-2zM644 288h2v1h-2zM654 288h2v1h-2zM664 288h2v1h-2zM674 288h2v1h-2zM684 288h2v1h-2zM694 288h2v1h-2zM705 288h2v1h-2zM715 288h2v1h-2zM725 288h2v1h-2zM735 288h2v1h-2zM745 288h2v1h-2zM755 288h2v1h-2zM765 288h2v1h-2zM775 288h2v1h-2zM785 288h2v1h-2zM795 288h2v1h-2zM805 288h2v1h-2zM815 288h2v1h-2zM825 288h2v1h-2zM835 288h2v1h-2zM845 288h2v1h-2zM855 288h2v1h-2zM865 288h2v1h-2zM875 288h2v1h-2zM885 288h2v1h-2zM895 288h2v1h-2zM905 288h2v1h-2zM915 288h2v1h-2zM925 288h2v1h-2zM935 288h2v1h-2zM945 288h2v1h-2zM955 288h2v1h-2zM965 288h2v1h-2zM975 288h2v1h-2zM985 288h2v1h-2zM995 288h2v1h-2zM1005 288h2v1h-2zM1015 288h2v1h-2zM1025 288h2v1h-2zM1035 288h2v1h-2zM1045 288h2v1h-2zM1055 288h2v1h-2zM1065 288h2v1h-2zM1075 288h2v1h-2zM1085 288h2v1h-2zM1095 288h2v1h-2zM1105 288h2v1h-2zM1115 288h2v1h-2zM1125 288h2v1h-2zM1135 288h2v1h-2zM1145 288h2v1h-2zM1155 288h2v1h-2zM1165 288h2v1h-2zM1175 288h2v1h-2zM1185 288h2v1h-2zM1195 288h2v1h-2zM1205 288h2v1h-2zM1216 288h2v1h-2zM1226 288h2v1h-2zM1236 288h2v1h-2zM1246 288h2v1h-2zM1256 288h2v1h-2zM1266 288h2v1h-2zM1276 288h2v1h-2zM1286 288h2v1h-2zM1296 288h2v1h-2zM1306 288h2v1h-2zM1316 288h2v1h-2zM1326 288h2v1h-2zM1336 288h2v1h-2zM1346 288h2v1h-2zM1356 288h2v1h-2zM1366 288h2v1h-2zM1376 288h2v1h-2zM1386 288h2v1h-2zM1396 288h2v1h-2zM1406 288h2v1h-2zM1416 288h2v1h-2zM1426 288h2v1h-2zM1436 288h2v1h-2zM1446 288h2v1h-2zM464 340h2v1h-2zM474 340h2v1h-2zM484 340h2v1h-2zM494 340h2v1h-2zM504 340h2v1h-2zM514 340h2v1h-2zM524 340h2v1h-2zM534 340h2v1h-2zM544 340h2v1h-2zM554 340h2v1h-2zM564 340h2v1h-2zM574 340h2v1h-2zM584 340h2v1h-2zM594 340h2v1h-2zM604 340h2v1h-2zM614 340h2v1h-2zM624 340h2v1h-2zM634 340h2v1h-2zM644 340h2v1h-2zM654 340h2v1h-2zM664 340h2v1h-2zM674 340h2v1h-2zM684 340h2v1h-2zM694 340h2v1h-2zM705 340h2v1h-2zM715 340h2v1h-2zM725 340h2v1h-2zM735 340h2v1h-2zM745 340h2v1h-2zM755 340h2v1h-2zM765 340h2v1h-2zM775 340h2v1h-2zM785 340h2v1h-2zM795 340h2v1h-2zM805 340h2v1h-2zM815 340h2v1h-2zM825 340h2v1h-2zM835 340h2v1h-2zM845 340h2v1h-2zM855 340h2v1h-2zM865 340h2v1h-2zM875 340h2v1h-2zM885 340h2v1h-2zM895 340h2v1h-2zM905 340h2v1h-2zM915 340h2v1h-2zM925 340h2v1h-2zM935 340h2v1h-2zM945 340h2v1h-2zM955 340h2v1h-2zM965 340h2v1h-2zM975 340h2v1h-2zM985 340h2v1h-2zM995 340h2v1h-2zM1005 340h2v1h-2zM1015 340h2v1h-2zM1025 340h2v1h-2zM1035 340h2v1h-2zM1045 340h2v1h-2zM1055 340h2v1h-2zM1065 340h2v1h-2zM1075 340h2v1h-2zM1085 340h2v1h-2zM1095 340h2v1h-2zM1105 340h2v1h-2zM1115 340h2v1h-2zM1125 340h2v1h-2zM1135 340h2v1h-2zM1145 340h2v1h-2zM1155 340h2v1h-2zM1165 340h2v1h-2zM1175 340h2v1h-2zM1185 340h2v1h-2zM1195 340h2v1h-2zM1205 340h2v1h-2zM1216 340h2v1h-2zM1226 340h2v1h-2zM1236 340h2v1h-2zM1246 340h2v1h-2zM1256 340h2v1h-2zM1266 340h2v1h-2zM1276 340h2v1h-2zM1286 340h2v1h-2zM1296 340h2v1h-2zM1306 340h2v1h-2zM1316 340h2v1h-2zM1326 340h2v1h-2zM1336 340h2v1h-2zM1346 340h2v1h-2zM1356 340h2v1h-2zM1366 340h2v1h-2zM1376 340h2v1h-2zM1386 340h2v1h-2zM1396 340h2v1h-2zM1406 340h2v1h-2zM1416 340h2v1h-2zM1426 340h2v1h-2zM1436 340h2v1h-2zM1446 340h2v1h-2zM464 443h2v1h-2zM474 443h2v1h-2zM484 443h2v1h-2zM494 443h2v1h-2zM504 443h2v1h-2zM514 443h2v1h-2zM524 443h2v1h-2zM534 443h2v1h-2zM544 443h2v1h-2zM554 443h2v1h-2zM564 443h2v1h-2zM574 443h2v1h-2zM584 443h2v1h-2zM594 443h2v1h-2zM604 443h2v1h-2zM614 443h2v1h-2zM624 443h2v1h-2zM634 443h2v1h-2zM644 443h2v1h-2zM654 443h2v1h-2zM664 443h2v1h-2zM674 443h2v1h-2zM684 443h2v1h-2zM694 443h2v1h-2zM705 443h2v1h-2zM715 443h2v1h-2zM725 443h2v1h-2zM735 443h2v1h-2zM745 443h2v1h-2zM755 443h2v1h-2zM765 443h2v1h-2zM775 443h2v1h-2zM785 443h2v1h-2zM795 443h2v1h-2zM805 443h2v1h-2zM815 443h2v1h-2zM825 443h2v1h-2zM835 443h2v1h-2zM845 443h2v1h-2zM855 443h2v1h-2zM865 443h2v1h-2zM875 443h2v1h-2zM885 443h2v1h-2zM895 443h2v1h-2zM905 443h2v1h-2zM915 443h2v1h-2zM925 443h2v1h-2zM935 443h2v1h-2zM945 443h2v1h-2zM955 443h2v1h-2zM965 443h2v1h-2zM975 443h2v1h-2zM985 443h2v1h-2zM995 443h2v1h-2zM1005 443h2v1h-2zM1015 443h2v1h-2zM1025 443h2v1h-2zM1035 443h2v1h-2zM1045 443h2v1h-2zM1055 443h2v1h-2zM1065 443h2v1h-2zM1075 443h2v1h-2zM1085 443h2v1h-2zM1095 443h2v1h-2zM1105 443h2v1h-2zM1115 443h2v1h-2zM1125 443h2v1h-2zM1135 443h2v1h-2zM1145 443h2v1h-2zM1155 443h2v1h-2zM1165 443h2v1h-2zM1175 443h2v1h-2zM1185 443h2v1h-2zM1195 443h2v1h-2zM1205 443h2v1h-2zM1216 443h2v1h-2zM1226 443h2v1h-2zM1236 443h2v1h-2zM1246 443h2v1h-2zM1256 443h2v1h-2zM1266 443h2v1h-2zM1276 443h2v1h-2zM1286 443h2v1h-2zM1296 443h2v1h-2zM1306 443h2v1h-2zM1316 443h2v1h-2zM1326 443h2v1h-2zM1336 443h2v1h-2zM1346 443h2v1h-2zM1356 443h2v1h-2zM1366 443h2v1h-2zM1376 443h2v1h-2zM1386 443h2v1h-2zM1396 443h2v1h-2zM1406 443h2v1h-2zM1416 443h2v1h-2zM1426 443h2v1h-2zM1436 443h2v1h-2zM1446 443h2v1h-2zM464 495h2v1h-2zM474 495h2v1h-2zM484 495h2v1h-2zM494 495h2v1h-2zM504 495h2v1h-2zM514 495h2v1h-2zM524 495h2v1h-2zM534 495h2v1h-2zM544 495h2v1h-2zM554 495h2v1h-2zM564 495h2v1h-2zM574 495h2v1h-2zM584 495h2v1h-2zM594 495h2v1h-2zM604 495h2v1h-2zM614 495h2v1h-2zM624 495h2v1h-2zM634 495h2v1h-2zM644 495h2v1h-2zM654 495h2v1h-2zM664 495h2v1h-2zM674 495h2v1h-2zM684 495h2v1h-2zM694 495h2v1h-2zM705 495h2v1h-2zM715 495h2v1h-2zM725 495h2v1h-2zM735 495h2v1h-2zM745 495h2v1h-2zM755 495h2v1h-2zM765 495h2v1h-2zM775 495h2v1h-2zM785 495h2v1h-2zM795 495h2v1h-2zM805 495h2v1h-2zM815 495h2v1h-2zM825 495h2v1h-2zM835 495h2v1h-2zM845 495h2v1h-2zM855 495h2v1h-2zM865 495h2v1h-2zM875 495h2v1h-2zM885 495h2v1h-2zM895 495h2v1h-2zM905 495h2v1h-2zM915 495h2v1h-2zM925 495h2v1h-2zM935 495h2v1h-2zM945 495h2v1h-2zM955 495h2v1h-2zM965 495h2v1h-2zM975 495h2v1h-2zM985 495h2v1h-2zM995 495h2v1h-2zM1005 495h2v1h-2zM1015 495h2v1h-2zM1025 495h2v1h-2zM1035 495h2v1h-2zM1045 495h2v1h-2zM1055 495h2v1h-2zM1065 495h2v1h-2zM1075 495h2v1h-2zM1085 495h2v1h-2zM1095 495h2v1h-2zM1105 495h2v1h-2zM1115 495h2v1h-2zM1125 495h2v1h-2zM1135 495h2v1h-2zM1145 495h2v1h-2zM1155 495h2v1h-2zM1165 495h2v1h-2zM1175 495h2v1h-2zM1185 495h2v1h-2zM1195 495h2v1h-2zM1205 495h2v1h-2zM1216 495h2v1h-2zM1226 495h2v1h-2zM1236 495h2v1h-2zM1246 495h2v1h-2zM1256 495h2v1h-2zM1266 495h2v1h-2zM1276 495h2v1h-2zM1286 495h2v1h-2zM1296 495h2v1h-2zM1306 495h2v1h-2zM1316 495h2v1h-2zM1326 495h2v1h-2zM1336 495h2v1h-2zM1346 495h2v1h-2zM1356 495h2v1h-2zM1366 495h2v1h-2zM1376 495h2v1h-2zM1386 495h2v1h-2zM1396 495h2v1h-2zM1406 495h2v1h-2zM1416 495h2v1h-2zM1426 495h2v1h-2zM1436 495h2v1h-2zM1446 495h2v1h-2zM464 547h2v1h-2zM474 547h2v1h-2zM484 547h2v1h-2zM494 547h2v1h-2zM504 547h2v1h-2zM514 547h2v1h-2zM524 547h2v1h-2zM534 547h2v1h-2zM544 547h2v1h-2zM554 547h2v1h-2zM564 547h2v1h-2zM574 547h2v1h-2zM584 547h2v1h-2zM594 547h2v1h-2zM604 547h2v1h-2zM614 547h2v1h-2zM624 547h2v1h-2zM634 547h2v1h-2zM644 547h2v1h-2zM654 547h2v1h-2zM664 547h2v1h-2zM674 547h2v1h-2zM684 547h2v1h-2zM694 547h2v1h-2zM705 547h2v1h-2zM715 547h2v1h-2zM725 547h2v1h-2zM735 547h2v1h-2zM745 547h2v1h-2zM755 547h2v1h-2zM765 547h2v1h-2zM775 547h2v1h-2zM785 547h2v1h-2zM795 547h2v1h-2zM805 547h2v1h-2zM815 547h2v1h-2zM825 547h2v1h-2zM835 547h2v1h-2zM845 547h2v1h-2zM855 547h2v1h-2zM865 547h2v1h-2zM875 547h2v1h-2zM885 547h2v1h-2zM895 547h2v1h-2zM905 547h2v1h-2zM915 547h2v1h-2zM925 547h2v1h-2zM935 547h2v1h-2zM945 547h2v1h-2zM955 547h2v1h-2zM965 547h2v1h-2zM975 547h2v1h-2zM985 547h2v1h-2zM995 547h2v1h-2zM1005 547h2v1h-2zM1015 547h2v1h-2zM1025 547h2v1h-2zM1035 547h2v1h-2zM1045 547h2v1h-2zM1055 547h2v1h-2zM1065 547h2v1h-2zM1075 547h2v1h-2zM1085 547h2v1h-2zM1095 547h2v1h-2zM1105 547h2v1h-2zM1115 547h2v1h-2zM1125 547h2v1h-2zM1135 547h2v1h-2zM1145 547h2v1h-2zM1155 547h2v1h-2zM1165 547h2v1h-2zM1175 547h2v1h-2zM1185 547h2v1h-2zM1195 547h2v1h-2zM1205 547h2v1h-2zM1216 547h2v1h-2zM1226 547h2v1h-2zM1236 547h2v1h-2zM1246 547h2v1h-2zM1256 547h2v1h-2zM1266 547h2v1h-2zM1276 547h2v1h-2zM1286 547h2v1h-2zM1296 547h2v1h-2zM1306 547h2v1h-2zM1316 547h2v1h-2zM1326 547h2v1h-2zM1336 547h2v1h-2zM1346 547h2v1h-2zM1356 547h2v1h-2zM1366 547h2v1h-2zM1376 547h2v1h-2zM1386 547h2v1h-2zM1396 547h2v1h-2zM1406 547h2v1h-2zM1416 547h2v1h-2zM1426 547h2v1h-2zM1436 547h2v1h-2zM1446 547h2v1h-2zM464 598h2v1h-2zM474 598h2v1h-2zM484 598h2v1h-2zM494 598h2v1h-2zM504 598h2v1h-2zM514 598h2v1h-2zM524 598h2v1h-2zM534 598h2v1h-2zM544 598h2v1h-2zM554 598h2v1h-2zM564 598h2v1h-2zM574 598h2v1h-2zM584 598h2v1h-2zM594 598h2v1h-2zM604 598h2v1h-2zM614 598h2v1h-2zM624 598h2v1h-2zM634 598h2v1h-2zM644 598h2v1h-2zM654 598h2v1h-2zM664 598h2v1h-2zM674 598h2v1h-2zM684 598h2v1h-2zM694 598h2v1h-2zM705 598h2v1h-2zM715 598h2v1h-2zM725 598h2v1h-2zM735 598h2v1h-2zM745 598h2v1h-2zM755 598h2v1h-2zM765 598h2v1h-2zM775 598h2v1h-2zM785 598h2v1h-2zM795 598h2v1h-2zM805 598h2v1h-2zM815 598h2v1h-2zM825 598h2v1h-2zM835 598h2v1h-2zM845 598h2v1h-2zM855 598h2v1h-2zM865 598h2v1h-2zM875 598h2v1h-2zM885 598h2v1h-2zM895 598h2v1h-2zM905 598h2v1h-2zM915 598h2v1h-2zM925 598h2v1h-2zM935 598h2v1h-2zM945 598h2v1h-2zM955 598h2v1h-2zM965 598h2v1h-2zM975 598h2v1h-2zM985 598h2v1h-2zM995 598h2v1h-2zM1005 598h2v1h-2zM1015 598h2v1h-2zM1025 598h2v1h-2zM1035 598h2v1h-2zM1045 598h2v1h-2zM1055 598h2v1h-2zM1065 598h2v1h-2zM1075 598h2v1h-2zM1085 598h2v1h-2zM1095 598h2v1h-2zM1105 598h2v1h-2zM1115 598h2v1h-2zM1125 598h2v1h-2zM1135 598h2v1h-2zM1145 598h2v1h-2zM1155 598h2v1h-2zM1165 598h2v1h-2zM1175 598h2v1h-2zM1185 598h2v1h-2zM1195 598h2v1h-2zM1205 598h2v1h-2zM1216 598h2v1h-2zM1226 598h2v1h-2zM1236 598h2v1h-2zM1246 598h2v1h-2zM1256 598h2v1h-2zM1266 598h2v1h-2zM1276 598h2v1h-2zM1286 598h2v1h-2zM1296 598h2v1h-2zM1306 598h2v1h-2zM1316 598h2v1h-2zM1326 598h2v1h-2zM1336 598h2v1h-2zM1346 598h2v1h-2zM1356 598h2v1h-2zM1366 598h2v1h-2zM1376 598h2v1h-2zM1386 598h2v1h-2zM1396 598h2v1h-2zM1406 598h2v1h-2zM1416 598h2v1h-2zM1426 598h2v1h-2zM1436 598h2v1h-2zM1446 598h2v1h-2z" fill="#858585" shape-rendering="crispEdges"/>
<path d="M455 184h5v1h-5zM463 184h5v1h-5zM471 184h5v1h-5zM479 184h5v1h-5zM487 184h5v1h-5zM495 184h5v1h-5zM503 184h5v1h-5zM511 184h5v1h-5zM519 184h5v1h-5zM527 184h5v1h-5zM535 184h5v1h-5zM543 184h5v1h-5zM551 184h5v1h-5zM559 184h5v1h-5zM567 184h5v1h-5zM575 184h5v1h-5zM583 184h5v1h-5zM591 184h5v1h-5zM599 184h5v1h-5zM607 184h5v1h-5zM615 184h5v1h-5zM623 184h5v1h-5zM631 184h5v1h-5zM639 184h5v1h-5zM647 184h5v1h-5zM655 184h5v1h-5zM663 184h5v1h-5zM671 184h5v1h-5zM679 184h5v1h-5zM687 184h5v1h-5zM695 184h5v1h-5zM703 184h5v1h-5zM711 184h5v1h-5zM719 184h5v1h-5zM727 184h5v1h-5zM735 184h5v1h-5zM743 184h5v1h-5zM751 184h5v1h-5zM759 184h5v1h-5zM767 184h5v1h-5zM775 184h5v1h-5zM783 184h5v1h-5zM791 184h5v1h-5zM799 184h5v1h-5zM807 184h5v1h-5zM815 184h5v1h-5zM823 184h5v1h-5zM831 184h5v1h-5zM839 184h5v1h-5zM847 184h5v1h-5zM855 184h5v1h-5zM863 184h5v1h-5zM871 184h5v1h-5zM879 184h5v1h-5zM887 184h5v1h-5zM895 184h5v1h-5zM903 184h5v1h-5zM911 184h5v1h-5zM919 184h5v1h-5zM927 184h5v1h-5zM935 184h5v1h-5zM943 184h5v1h-5zM951 184h5v1h-5zM959 184h5v1h-5zM967 184h5v1h-5zM975 184h5v1h-5zM983 184h5v1h-5zM991 184h5v1h-5zM999 184h5v1h-5zM1007 184h5v1h-5zM1015 184h5v1h-5zM1023 184h5v1h-5zM1031 184h5v1h-5zM1039 184h5v1h-5zM1047 184h5v1h-5zM1055 184h5v1h-5zM1063 184h5v1h-5zM1071 184h5v1h-5zM1079 184h5v1h-5zM1087 184h5v1h-5zM1095 184h5v1h-5zM1103 184h5v1h-5zM1111 184h5v1h-5zM1119 184h5v1h-5zM1127 184h5v1h-5zM1135 184h5v1h-5zM1143 184h5v1h-5zM1151 184h5v1h-5zM1159 184h5v1h-5zM1167 184h5v1h-5zM1175 184h5v1h-5zM1183 184h5v1h-5zM1191 184h5v1h-5zM1199 184h5v1h-5zM1207 184h5v1h-5zM1215 184h5v1h-5zM1223 184h5v1h-5zM1231 184h5v1h-5zM1239 184h5v1h-5zM1247 184h5v1h-5zM1255 184h5v1h-5zM1263 184h5v1h-5zM1271 184h5v1h-5zM1279 184h5v1h-5zM1287 184h5v1h-5zM1295 184h5v1h-5zM1303 184h5v1h-5zM1311 184h5v1h-5zM1319 184h5v1h-5zM1327 184h5v1h-5zM1335 184h5v1h-5zM1343 184h5v1h-5zM1351 184h5v1h-5zM1359 184h5v1h-5zM1367 184h5v1h-5zM1375 184h5v1h-5zM1383 184h5v1h-5zM1391 184h5v1h-5zM1399 184h5v1h-5zM1407 184h5v1h-5zM1415 184h5v1h-5zM1423 184h5v1h-5zM1431 184h5v1h-5zM1439 184h5v1h-5zM1447 184h5v1h-5zM1455 184h2v1h-2zM455 598h5v1h-5zM463 598h5v1h-5zM471 598h5v1h-5zM479 598h5v1h-5zM487 598h5v1h-5zM495 598h5v1h-5zM503 598h5v1h-5zM511 598h5v1h-5zM519 598h5v1h-5zM527 598h5v1h-5zM535 598h5v1h-5zM543 598h5v1h-5zM551 598h5v1h-5zM559 598h5v1h-5zM567 598h5v1h-5zM575 598h5v1h-5zM583 598h5v1h-5zM591 598h5v1h-5zM599 598h5v1h-5zM607 598h5v1h-5zM615 598h5v1h-5zM623 598h5v1h-5zM631 598h5v1h-5zM639 598h5v1h-5zM647 598h5v1h-5zM655 598h5v1h-5zM663 598h5v1h-5zM671 598h5v1h-5zM679 598h5v1h-5zM687 598h5v1h-5zM695 598h5v1h-5zM703 598h5v1h-5zM711 598h5v1h-5zM719 598h5v1h-5zM727 598h5v1h-5zM735 598h5v1h-5zM743 598h5v1h-5zM751 598h5v1h-5zM759 598h5v1h-5zM767 598h5v1h-5zM775 598h5v1h-5zM783 598h5v1h-5zM791 598h5v1h-5zM799 598h5v1h-5zM807 598h5v1h-5zM815 598h5v1h-5zM823 598h5v1h-5zM831 598h5v1h-5zM839 598h5v1h-5zM847 598h5v1h-5zM855 598h5v1h-5zM863 598h5v1h-5zM871 598h5v1h-5zM879 598h5v1h-5zM887 598h5v1h-5zM895 598h5v1h-5zM903 598h5v1h-5zM911 598h5v1h-5zM919 598h5v1h-5zM927 598h5v1h-5zM935 598h5v1h-5zM943 598h5v1h-5zM951 598h5v1h-5zM959 598h5v1h-5zM967 598h5v1h-5zM975 598h5v1h-5zM983 598h5v1h-5zM991 598h5v1h-5zM999 598h5v1h-5zM1007 598h5v1h-5zM1015 598h5v1h-5zM1023 598h5v1h-5zM1031 598h5v1h-5zM1039 598h5v1h-5zM1047 598h5v1h-5zM1055 598h5v1h-5zM1063 598h5v1h-5zM1071 598h5v1h-5zM1079 598h5v1h-5zM1087 598h5v1h-5zM1095 598h5v1h-5zM1103 598h5v1h-5zM1111 598h5v1h-5zM1119 598h5v1h-5zM1127 598h5v1h-5zM1135 598h5v1h-5zM1143 598h5v1h-5zM1151 598h5v1h-5zM1159 598h5v1h-5zM1167 598h5v1h-5zM1175 598h5v1h-5zM1183 598h5v1h-5zM1191 598h5v1h-5zM1199 598h5v1h-5zM1207 598h5v1h-5zM1215 598h5v1h-5zM1223 598h5v1h-5zM1231 598h5v1h-5zM1239 598h5v1h-5zM1247 598h5v1h-5zM1255 598h5v1h-5zM1263 598h5v1h-5zM1271 598h5v1h-5zM1279 598h5v1h-5zM1287 598h5v1h-5zM1295 598h5v1h-5zM1303 598h5v1h-5zM1311 598h5v1h-5zM1319 598h5v1h-5zM1327 598h5v1h-5zM1335 598h5v1h-5zM1343 598h5v1h-5zM1351 598h5v1h-5zM1359 598h5v1h-5zM1367 598h5v1h-5zM1375 598h5v1h-5zM1383 598h5v1h-5zM1391 598h5v1h-5zM1399 598h5v1h-5zM1407 598h5v1h-5zM1415 598h5v1h-5zM1423 598h5v1h-5zM1431 598h5v1h-5zM1439 598h5v1h-5zM1447 598h5v1h-5zM1455 598h2v1h-2z" fill="#3cff3c" shape-rendering="crispEdges"/>
<path d="M456 390h1v4h-1zM457 265h1v127h-1zM458 265h1v3h-1zM459 265h1v3h-1zM460 265h1v3h-1zM461 265h1v3h-1zM462 265h1v3h-1zM463 265h1v3h-1zM464 264h1v4h-1zM465 264h1v2h-1zM466 264h1v3h-1zM467 264h1v3h-1zM468 264h1v2h-1zM469 264h1v2h-1zM470 264h1v3h-1zM471 263h1v3h-1zM472 264h1v2h-1zM473 264h1v2h-1zM474 264h1v2h-1zM475 264h1v2h-1zM476 264h1v2h-1zM477 264h1v3h-1zM478 264h1v2h-1zM479 263h1v3h-1zM480 264h1v3h-1zM481 264h1v3h-1zM482 264h1v4h-1zM483 264h1v2h-1zM484 264h1v3h-1zM485 264h1v2h-1zM486 264h1v2h-1zM487 264h1v2h-1zM488 264h1v2h-1zM489 264h1v3h-1zM490 264h1v3h-1zM491 264h1v3h-1zM492 264h1v2h-1zM493 264h1v2h-1zM494 264h1v4h-1zM495 264h1v2h-1zM496 264h1v2h-1zM497 263h1v3h-1zM498 264h1v2h-1zM499 264h1v2h-1zM500 263h1v3h-1zM501 264h1v2h-1zM502 262h1v2h-1zM503 262h1v2h-1zM504 262h1v2h-1zM505 261h1v3h-1zM506 262h1v2h-1zM507 262h1v3h-1zM508 262h1v2h-1zM509 262h1v2h-1zM510 262h1v3h-1zM511 262h1v2h-1zM512 262h1v3h-1zM513 262h1v2h-1zM514 262h1v2h-1zM515 262h1v2h-1zM516 262h1v2h-1zM517 262h1v4h-1zM518 262h1v2h-1zM519 262h1v2h-1zM520 262h1v2h-1zM521 262h1v2h-1zM522 262h1v2h-1zM523 262h1v2h-1zM524 262h1v2h-1zM525 262h1v2h-1zM526 262h1v3h-1zM527 262h1v2h-1zM528 262h1v2h-1zM529 262h1v2h-1zM530 262h1v2h-1zM531 261h1v3h-1zM532 262h1v2h-1zM533 262h1v2h-1zM534 262h1v3h-1zM535 262h1v2h-1zM536 262h1v3h-1zM537 262h1v3h-1zM538 262h1v3h-1zM539 262h1v2h-1zM540 262h1v3h-1zM541 261h1v3h-1zM542 262h1v2h-1zM543 262h1v2h-1zM544 262h1v3h-1zM545 262h1v2h-1zM546 262h1v2h-1zM547 262h1v2h-1zM548 262h1v2h-1zM549 262h1v2h-1zM550 261h1v3h-1zM551 262h1v2h-1zM552 262h1v2h-1zM553 262h1v2h-1zM554 262h1v2h-1zM555 262h1v3h-1zM556 262h1v3h-1zM557 261h1v3h-1zM558 261h1v3h-1zM559 262h1v2h-1zM560 262h1v2h-1zM561 261h1v3h-1zM562 262h1v3h-1zM563 262h1v2h-1zM564 262h1v2h-1zM565 262h1v2h-1zM566 262h1v2h-1zM567 262h1v2h-1zM568 262h1v2h-1zM569 262h1v2h-1zM570 262h1v2h-1zM571 262h1v3h-1zM572 262h1v2h-1zM573 262h1v2h-1zM574 262h1v2h-1zM575 262h1v2h-1zM576 262h1v2h-1zM577 262h1v2h-1zM578 262h1v3h-1zM579 262h1v2h-1zM580 262h1v3h-1zM581 262h1v3h-1zM582 262h1v125h-1zM583 385h1v4h-1zM584 385h1v3h-1zM585 385h1v4h-1zM586 385h1v4h-1zM587 385h1v4h-1zM588 385h1v4h-1zM589 385h1v3h-1zM590 385h1v4h-1zM591 385h1v3h-1zM592 385h1v3h-1zM593 385h1v4h-1zM594 384h1v3h-1zM595 386h1v1h-1zM596 386h1v1h-1zM597 386h1v3h-1zM598 386h1v1h-1zM599 386h1v1h-1zM600 388h1v2h-1zM601 388h1v2h-1zM602 388h1v3h-1zM603 388h1v3h-1zM604 388h1v2h-1zM605 387h1v3h-1zM606 388h1v2h-1zM607 388h1v3h-1zM608 388h1v3h-1zM609 388h1v2h-1zM610 388h1v2h-1zM611 388h1v3h-1zM612 388h1v2h-1zM613 388h1v3h-1zM614 388h1v2h-1zM615 388h1v2h-1zM616 388h1v2h-1zM617 388h1v2h-1zM618 387h1v3h-1zM619 388h1v2h-1zM620 388h1v3h-1zM621 388h1v2h-1zM622 388h1v2h-1zM623 388h1v2h-1zM624 388h1v4h-1zM625 387h1v3h-1zM626 388h1v2h-1zM627 388h1v2h-1zM628 388h1v2h-1zM629 388h1v2h-1zM630 388h1v2h-1zM631 388h1v2h-1zM632 388h1v3h-1zM633 389h1v2h-1zM634 389h1v2h-1zM635 389h1v3h-1zM636 389h1v3h-1zM637 388h1v3h-1zM638 388h1v3h-1zM639 389h1v2h-1zM640 389h1v2h-1zM641 389h1v2h-1zM642 389h1v2h-1zM643 389h1v2h-1zM644 389h1v2h-1zM645 389h1v2h-1zM646 388h1v3h-1zM647 388h1v3h-1zM648 389h1v3h-1zM649 389h1v3h-1zM650 389h1v2h-1zM651 389h1v2h-1zM652 389h1v2h-1zM653 389h1v2h-1zM654 389h1v2h-1zM655 389h1v2h-1zM656 389h1v3h-1zM657 389h1v2h-1zM658 389h1v2h-1zM659 389h1v2h-1zM660 389h1v2h-1zM661 389h1v2h-1zM662 389h1v3h-1zM663 389h1v2h-1zM664 389h1v4h-1zM665 389h1v2h-1zM666 389h1v2h-1zM667 389h1v2h-1zM668 389h1v2h-1zM669 389h1v2h-1zM670 389h1v2h-1zM671 389h1v3h-1zM672 389h1v3h-1zM673 389h1v3h-1zM674 389h1v2h-1zM675 389h1v2h-1zM676 389h1v3h-1zM677 390h1v2h-1zM678 390h1v2h-1zM679 390h1v2h-1zM680 390h1v2h-1zM681 390h1v2h-1zM682 390h1v3h-1zM683 390h1v3h-1zM684 390h1v2h-1zM685 390h1v2h-1zM686 390h1v2h-1zM687 390h1v2h-1zM688 390h1v2h-1zM689 390h1v2h-1zM690 390h1v2h-1zM691 390h1v3h-1zM692 389h1v3h-1zM693 389h1v3h-1zM694 389h1v3h-1zM695 390h1v2h-1zM696 389h1v3h-1zM697 390h1v2h-1zM698 390h1v3h-1zM699 390h1v2h-1zM700 390h1v2h-1zM701 390h1v2h-1zM702 390h1v2h-1zM703 390h1v2h-1zM704 390h1v2h-1zM705 390h1v2h-1zM706 390h1v2h-1zM707 265h1v127h-1zM708 265h1v3h-1zM709 265h1v3h-1zM710 265h1v3h-1zM711 265h1v3h-1zM712 265h1v3h-1zM713 265h1v3h-1zM714 264h1v4h-1zM715 264h1v2h-1zM716 264h1v2h-1zM717 264h1v2h-1zM718 264h1v4h-1zM719 264h1v2h-1zM720 264h1v2h-1zM721 264h1v2h-1zM722 264h1v3h-1zM723 264h1v2h-1zM724 263h1v3h-1zM725 263h1v3h-1zM726 264h1v2h-1zM727 264h1v2h-1zM728 264h1v2h-1zM729 264h1v2h-1zM730 264h1v2h-1zM731 264h1v2h-1zM732 264h1v2h-1zM733 264h1v2h-1zM734 264h1v2h-1zM735 264h1v2h-1zM736 264h1v2h-1zM737 264h1v2h-1zM738 264h1v2h-1zM739 264h1v2h-1zM740 264h1v2h-1zM741 264h1v2h-1zM742 264h1v2h-1zM743 263h1v3h-1zM744 264h1v2h-1zM745 264h1v2h-1zM746 264h1v2h-1zM747 264h1v3h-1zM748 264h1v3h-1zM749 264h1v2h-1zM750 264h1v3h-1zM751 263h1v3h-1zM752 262h1v3h-1zM753 262h1v2h-1zM754 262h1v2h-1zM755 262h1v2h-1zM756 262h1v3h-1zM757 262h1v2h-1zM758 262h1v2h-1zM759 262h1v3h-1zM760 262h1v2h-1zM761 262h1v2h-1zM762 262h1v3h-1zM763 262h1v2h-1zM764 262h1v2h-1zM765 262h1v2h-1zM766 262h1v2h-1zM767 262h1v2h-1zM768 262h1v3h-1zM769 262h1v2h-1zM770 262h1v2h-1zM771 262h1v4h-1zM772 262h1v3h-1zM773 262h1v4h-1zM774 262h1v2h-1zM775 262h1v3h-1zM776 262h1v2h-1zM777 262h1v2h-1zM778 262h1v3h-1zM779 262h1v4h-1zM780 262h1v2h-1zM781 262h1v2h-1zM782 262h1v3h-1zM783 262h1v2h-1zM784 262h1v2h-1zM785 262h1v2h-1zM786 262h1v3h-1zM787 261h1v3h-1zM788 262h1v3h-1zM789 262h1v2h-1zM790 261h1v3h-1zM791 262h1v3h-1zM792 262h1v2h-1zM793 262h1v2h-1zM794 262h1v2h-1zM795 261h1v3h-1zM796 262h1v3h-1zM797 262h1v2h-1zM798 262h1v2h-1zM799 262h1v2h-1zM800 262h1v3h-1zM801 262h1v3h-1zM802 262h1v2h-1zM803 262h1v2h-1zM804 262h1v3h-1zM805 262h1v2h-1zM806 262h1v2h-1zM807 262h1v2h-1zM808 262h1v3h-1zM809 262h1v2h-1zM810 262h1v3h-1zM811 262h1v2h-1zM812 262h1v2h-1zM813 262h1v4h-1zM814 262h1v2h-1zM815 262h1v2h-1zM816 261h1v3h-1zM817 262h1v3h-1zM818 262h1v2h-1zM819 261h1v3h-1zM820 262h1v3h-1zM821 262h1v3h-1zM822 262h1v3h-1zM823 262h1v3h-1zM824 262h1v4h-1zM825 262h1v4h-1zM826 262h1v2h-1zM827 261h1v3h-1zM828 262h1v2h-1zM829 262h1v3h-1zM830 262h1v2h-1zM831 262h1v3h-1zM832 261h1v3h-1zM833 262h1v125h-1zM834 385h1v3h-1zM835 385h1v3h-1zM836 385h1v4h-1zM837 385h1v3h-1zM838 385h1v3h-1zM839 385h1v4h-1zM840 385h1v3h-1zM841 385h1v3h-1zM842 385h1v3h-1zM843 385h1v3h-1zM844 385h1v3h-1zM845 386h1v1h-1zM846 386h1v1h-1zM847 386h1v1h-1zM848 386h1v1h-1zM849 386h1v1h-1zM850 386h1v1h-1zM851 388h1v2h-1zM852 388h1v2h-1zM853 388h1v2h-1zM854 388h1v3h-1zM855 388h1v3h-1zM856 388h1v3h-1zM857 388h1v2h-1zM858 387h1v3h-1zM859 388h1v3h-1zM860 388h1v3h-1zM861 388h1v2h-1zM862 388h1v2h-1zM863 388h1v2h-1zM864 387h1v3h-1zM865 387h1v3h-1zM866 387h1v3h-1zM867 388h1v2h-1zM868 388h1v3h-1zM869 388h1v2h-1zM870 387h1v3h-1zM871 388h1v2h-1zM872 388h1v2h-1zM873 388h1v2h-1zM874 387h1v3h-1zM875 388h1v2h-1zM876 388h1v4h-1zM877 388h1v2h-1zM878 388h1v3h-1zM879 388h1v2h-1zM880 388h1v2h-1zM881 388h1v2h-1zM882 388h1v3h-1zM883 389h1v2h-1zM884 389h1v3h-1zM885 388h1v3h-1zM886 389h1v3h-1zM887 389h1v2h-1zM888 389h1v3h-1zM889 389h1v3h-1zM890 389h1v4h-1zM891 388h1v3h-1zM892 389h1v2h-1zM893 389h1v2h-1zM894 389h1v2h-1zM895 389h1v2h-1zM896 389h1v2h-1zM897 389h1v2h-1zM898 389h1v2h-1zM899 389h1v4h-1zM900 389h1v2h-1zM901 389h1v3h-1zM902 389h1v2h-1zM903 389h1v2h-1zM904 389h1v3h-1zM905 389h1v2h-1zM906 389h1v2h-1zM907 389h1v2h-1zM908 389h1v2h-1zM909 389h1v2h-1zM910 389h1v3h-1zM911 389h1v2h-1zM912 389h1v2h-1zM913 389h1v2h-1zM914 389h1v2h-1zM915 389h1v2h-1zM916 389h1v2h-1zM917 389h1v2h-1zM918 389h1v2h-1zM919 389h1v2h-1zM920 388h1v3h-1zM921 389h1v3h-1zM922 389h1v3h-1zM923 389h1v2h-1zM924 389h1v3h-1zM925 389h1v2h-1zM926 389h1v2h-1zM927 389h1v2h-1zM928 390h1v2h-1zM929 390h1v2h-1zM930 390h1v2h-1zM931 390h1v3h-1zM932 390h1v2h-1zM933 390h1v2h-1zM934 390h1v2h-1zM935 390h1v2h-1zM936 390h1v2h-1zM937 390h1v3h-1zM938 390h1v2h-1zM939 389h1v3h-1zM940 390h1v3h-1zM941 389h1v3h-1zM942 390h1v2h-1zM943 390h1v3h-1zM944 390h1v2h-1zM945 390h1v2h-1zM946 390h1v2h-1zM947 390h1v2h-1zM948 390h1v2h-1zM949 390h1v2h-1zM950 390h1v2h-1zM951 390h1v2h-1zM952 390h1v2h-1zM953 390h1v3h-1zM954 390h1v3h-1zM955 389h1v3h-1zM956 390h1v2h-1zM957 390h1v4h-1zM958 265h1v127h-1zM959 265h1v3h-1zM960 265h1v3h-1zM961 264h1v4h-1zM962 265h1v3h-1zM963 265h1v3h-1zM964 265h1v3h-1zM965 263h1v5h-1zM966 264h1v2h-1zM967 264h1v2h-1zM968 264h1v2h-1zM969 264h1v3h-1zM970 264h1v2h-1zM971 264h1v3h-1zM972 264h1v2h-1zM973 264h1v2h-1zM974 264h1v3h-1zM975 264h1v2h-1zM976 264h1v2h-1zM977 264h1v2h-1zM978 264h1v2h-1zM979 263h1v3h-1zM980 264h1v3h-1zM981 264h1v2h-1zM982 264h1v3h-1zM983 264h1v2h-1zM984 264h1v3h-1zM985 264h1v2h-1zM986 264h1v2h-1zM987 264h1v3h-1zM988 264h1v2h-1zM989 264h1v2h-1zM990 264h1v2h-1zM991 264h1v2h-1zM992 263h1v3h-1zM993 264h1v2h-1zM994 264h1v2h-1zM995 264h1v3h-1zM996 264h1v3h-1zM997 264h1v2h-1zM998 264h1v2h-1zM999 264h1v4h-1zM1000 264h1v3h-1zM1001 264h1v2h-1zM1002 264h1v4h-1zM1003 262h1v2h-1zM1004 262h1v3h-1zM1005 262h1v2h-1zM1006 262h1v2h-1zM1007 262h1v3h-1zM1008 262h1v2h-1zM1009 262h1v2h-1zM1010 262h1v2h-1zM1011 261h1v3h-1zM1012 262h1v2h-1zM1013 262h1v2h-1zM1014 262h1v2h-1zM1015 262h1v2h-1zM1016 262h1v2h-1zM1017 262h1v2h-1zM1018 261h1v3h-1zM1019 262h1v3h-1zM1020 262h1v3h-1zM1021 262h1v2h-1zM1022 261h1v3h-1zM1023 262h1v2h-1zM1024 261h1v3h-1zM1025 261h1v3h-1zM1026 262h1v2h-1zM1027 262h1v3h-1zM1028 262h1v2h-1zM1029 262h1v2h-1zM1030 262h1v2h-1zM1031 262h1v2h-1zM1032 262h1v2h-1zM1033 262h1v2h-1zM1034 262h1v2h-1zM1035 262h1v2h-1zM1036 262h1v2h-1zM1037 262h1v3h-1zM1038 262h1v2h-1zM1039 262h1v2h-1zM1040 262h1v2h-1zM1041 262h1v2h-1zM1042 261h1v3h-1zM1043 262h1v3h-1zM1044 262h1v2h-1zM1045 262h1v3h-1zM1046 262h1v2h-1zM1047 262h1v2h-1zM1048 261h1v3h-1zM1049 262h1v2h-1zM1050 262h1v2h-1zM1051 261h1v3h-1zM1052 262h1v2h-1zM1053 262h1v4h-1zM1054 262h1v2h-1zM1055 262h1v2h-1zM1056 262h1v3h-1zM1057 262h1v3h-1zM1058 262h1v3h-1zM1059 262h1v2h-1zM1060 262h1v2h-1zM1061 261h1v3h-1zM1062 262h1v2h-1zM1063 262h1v2h-1zM1064 262h1v2h-1zM1065 262h1v3h-1zM1066 262h1v3h-1zM1067 262h1v3h-1zM1068 262h1v2h-1zM1069 262h1v3h-1zM1070 261h1v3h-1zM1071 261h1v3h-1zM1072 262h1v2h-1zM1073 262h1v2h-1zM1074 262h1v2h-1zM1075 262h1v2h-1zM1076 262h1v2h-1zM1077 262h1v2h-1zM1078 262h1v2h-1zM1079 262h1v4h-1zM1080 262h1v3h-1zM1081 261h1v3h-1zM1082 262h1v2h-1zM1083 262h1v125h-1zM1084 385h1v3h-1zM1085 385h1v3h-1zM1086 385h1v3h-1zM1087 385h1v4h-1zM1088 384h1v4h-1zM1089 384h1v4h-1zM1090 385h1v3h-1zM1091 385h1v3h-1zM1092 385h1v3h-1zM1093 385h1v3h-1zM1094 385h1v3h-1zM1095 386h1v3h-1zM1096 386h1v3h-1zM1097 386h1v1h-1zM1098 386h1v1h-1zM1099 386h1v1h-1zM1100 386h1v1h-1zM1101 388h1v3h-1zM1102 388h1v2h-1zM1103 388h1v2h-1zM1104 388h1v2h-1zM1105 388h1v2h-1zM1106 388h1v2h-1zM1107 387h1v3h-1zM1108 388h1v3h-1zM1109 388h1v3h-1zM1110 388h1v2h-1zM1111 388h1v2h-1zM1112 388h1v2h-1zM1113 388h1v2h-1zM1114 388h1v2h-1zM1115 388h1v2h-1zM1116 388h1v2h-1zM1117 388h1v2h-1zM1118 388h1v3h-1zM1119 388h1v2h-1zM1120 387h1v3h-1zM1121 388h1v2h-1zM1122 388h1v2h-1zM1123 388h1v4h-1zM1124 388h1v3h-1zM1125 387h1v3h-1zM1126 388h1v2h-1zM1127 388h1v2h-1zM1128 388h1v3h-1zM1129 388h1v3h-1zM1130 388h1v2h-1zM1131 388h1v2h-1zM1132 388h1v2h-1zM1133 388h1v3h-1zM1134 389h1v2h-1zM1135 389h1v3h-1zM1136 389h1v4h-1zM1137 389h1v2h-1zM1138 389h1v2h-1zM1139 389h1v2h-1zM1140 389h1v2h-1zM1141 389h1v2h-1zM1142 388h1v3h-1zM1143 388h1v3h-1zM1144 389h1v2h-1zM1145 389h1v2h-1zM1146 389h1v4h-1zM1147 389h1v3h-1zM1148 389h1v2h-1zM1149 389h1v2h-1zM1150 389h1v2h-1zM1151 388h1v3h-1zM1152 389h1v2h-1zM1153 389h1v2h-1zM1154 388h1v3h-1zM1155 389h1v3h-1zM1156 389h1v4h-1zM1157 389h1v2h-1zM1158 389h1v2h-1zM1159 389h1v3h-1zM1160 389h1v2h-1zM1161 389h1v2h-1zM1162 389h1v2h-1zM1163 389h1v3h-1zM1164 389h1v2h-1zM1165 389h1v4h-1zM1166 389h1v2h-1zM1167 388h1v3h-1zM1168 388h1v3h-1zM1169 389h1v2h-1zM1170 388h1v3h-1zM1171 389h1v2h-1zM1172 389h1v2h-1zM1173 389h1v3h-1zM1174 388h1v3h-1zM1175 389h1v2h-1zM1176 389h1v2h-1zM1177 389h1v2h-1zM1178 390h1v3h-1zM1179 390h1v2h-1zM1180 390h1v3h-1zM1181 390h1v2h-1zM1182 390h1v3h-1zM1183 390h1v3h-1zM1184 390h1v3h-1zM1185 390h1v2h-1zM1186 390h1v2h-1zM1187 390h1v2h-1zM1188 390h1v2h-1zM1189 390h1v2h-1zM1190 390h1v2h-1zM1191 390h1v4h-1zM1192 390h1v3h-1zM1193 390h1v2h-1zM1194 390h1v2h-1zM1195 390h1v3h-1zM1196 390h1v2h-1zM1197 390h1v2h-1zM1198 390h1v2h-1zM1199 390h1v4h-1zM1200 390h1v3h-1zM1201 390h1v3h-1zM1202 389h1v3h-1zM1203 390h1v2h-1zM1204 390h1v2h-1zM1205 390h1v3h-1zM1206 390h1v2h-1zM1207 390h1v3h-1zM1208 265h1v127h-1zM1209 265h1v3h-1zM1210 265h1v3h-1zM1211 265h1v3h-1zM1212 265h1v3h-1zM1213 265h1v3h-1zM1214 265h1v3h-1zM1215 264h1v4h-1zM1216 264h1v3h-1zM1217 264h1v2h-1zM1218 264h1v2h-1zM1219 264h1v3h-1zM1220 264h1v2h-1zM1221 264h1v2h-1zM1222 264h1v2h-1zM1223 264h1v3h-1zM1224 264h1v3h-1zM1225 264h1v3h-1zM1226 264h1v2h-1zM1227 263h1v3h-1zM1228 264h1v2h-1zM1229 264h1v2h-1zM1230 264h1v4h-1zM1231 263h1v3h-1zM1232 264h1v2h-1zM1233 264h1v2h-1zM1234 263h1v3h-1zM1235 264h1v2h-1zM1236 264h1v4h-1zM1237 263h1v3h-1zM1238 264h1v3h-1zM1239 264h1v2h-1zM1240 264h1v2h-1zM1241 264h1v2h-1zM1242 264h1v2h-1zM1243 264h1v3h-1zM1244 263h1v3h-1zM1245 264h1v2h-1zM1246 264h1v2h-1zM1247 264h1v2h-1zM1248 264h1v2h-1zM1249 263h1v3h-1zM1250 264h1v2h-1zM1251 264h1v2h-1zM1252 264h1v2h-1zM1253 262h1v3h-1zM1254 262h1v2h-1zM1255 262h1v2h-1zM1256 262h1v2h-1zM1257 262h1v2h-1zM1258 262h1v2h-1zM1259 262h1v4h-1zM1260 262h1v4h-1zM1261 262h1v2h-1zM1262 262h1v2h-1zM1263 262h1v3h-1zM1264 262h1v3h-1zM1265 262h1v2h-1zM1266 261h1v3h-1zM1267 262h1v3h-1zM1268 262h1v3h-1zM1269 262h1v2h-1zM1270 262h1v4h-1zM1271 262h1v2h-1zM1272 262h1v2h-1zM1273 262h1v2h-1zM1274 261h1v3h-1zM1275 262h1v3h-1zM1276 262h1v3h-1zM1277 262h1v2h-1zM1278 262h1v2h-1zM1279 262h1v2h-1zM1280 261h1v3h-1zM1281 262h1v2h-1zM1282 262h1v2h-1zM1283 262h1v2h-1zM1284 262h1v2h-1zM1285 262h1v2h-1zM1286 262h1v2h-1zM1287 262h1v3h-1zM1288 262h1v2h-1zM1289 261h1v3h-1zM1290 262h1v2h-1zM1291 262h1v2h-1zM1292 262h1v2h-1zM1293 262h1v3h-1zM1294 261h1v3h-1zM1295 261h1v3h-1zM1296 262h1v3h-1zM1297 262h1v2h-1zM1298 262h1v2h-1zM1299 262h1v4h-1zM1300 262h1v2h-1zM1301 262h1v2h-1zM1302 262h1v2h-1zM1303 261h1v3h-1zM1304 262h1v2h-1zM1305 262h1v2h-1zM1306 262h1v2h-1zM1307 262h1v3h-1zM1308 262h1v2h-1zM1309 262h1v2h-1zM1310 262h1v2h-1zM1311 262h1v2h-1zM1312 262h1v3h-1zM1313 261h1v3h-1zM1314 262h1v3h-1zM1315 262h1v3h-1zM1316 262h1v2h-1zM1317 262h1v2h-1zM1318 262h1v2h-1zM1319 262h1v2h-1zM1320 262h1v2h-1zM1321 262h1v2h-1zM1322 261h1v3h-1zM1323 262h1v2h-1zM1324 262h1v2h-1zM1325 262h1v3h-1zM1326 262h1v2h-1zM1327 262h1v2h-1zM1328 262h1v3h-1zM1329 262h1v2h-1zM1330 262h1v3h-1zM1331 262h1v3h-1zM1332 261h1v3h-1zM1333 262h1v125h-1zM1334 385h1v3h-1zM1335 385h1v4h-1zM1336 385h1v4h-1zM1337 385h1v4h-1zM1338 385h1v3h-1zM1339 385h1v4h-1zM1340 385h1v4h-1zM1341 385h1v4h-1zM1342 385h1v3h-1zM1343 385h1v3h-1zM1344 385h1v4h-1zM1345 386h1v3h-1zM1346 386h1v1h-1zM1347 386h1v1h-1zM1348 386h1v1h-1zM1349 386h1v3h-1zM1350 386h1v3h-1zM1351 388h1v2h-1zM1352 388h1v2h-1zM1353 387h1v3h-1zM1354 388h1v4h-1zM1355 388h1v2h-1zM1356 388h1v4h-1zM1357 388h1v2h-1zM1358 388h1v2h-1zM1359 388h1v2h-1zM1360 388h1v2h-1zM1361 388h1v2h-1zM1362 388h1v2h-1zM1363 388h1v3h-1zM1364 388h1v2h-1zM1365 388h1v3h-1zM1366 388h1v3h-1zM1367 388h1v2h-1zM1368 388h1v2h-1zM1369 388h1v2h-1zM1370 388h1v2h-1zM1371 388h1v2h-1zM1372 388h1v2h-1zM1373 388h1v3h-1zM1374 388h1v3h-1zM1375 388h1v2h-1zM1376 388h1v2h-1zM1377 388h1v2h-1zM1378 388h1v3h-1zM1379 388h1v2h-1zM1380 388h1v2h-1zM1381 388h1v2h-1zM1382 388h1v3h-1zM1383 388h1v3h-1zM1384 389h1v2h-1zM1385 389h1v2h-1zM1386 389h1v3h-1zM1387 389h1v2h-1zM1388 389h1v2h-1zM1389 389h1v2h-1zM1390 389h1v3h-1zM1391 389h1v3h-1zM1392 389h1v2h-1zM1393 389h1v2h-1zM1394 389h1v2h-1zM1395 389h1v3h-1zM1396 389h1v2h-1zM1397 389h1v2h-1zM1398 389h1v2h-1zM1399 389h1v2h-1zM1400 389h1v2h-1zM1401 389h1v3h-1zM1402 389h1v2h-1zM1403 388h1v3h-1zM1404 389h1v2h-1zM1405 389h1v2h-1zM1406 389h1v2h-1zM1407 389h1v3h-1zM1408 389h1v3h-1zM1409 389h1v2h-1zM1410 389h1v2h-1zM1411 389h1v2h-1zM1412 389h1v3h-1zM1413 388h1v3h-1zM1414 389h1v2h-1zM1415 389h1v2h-1zM1416 389h1v3h-1zM1417 389h1v2h-1zM1418 389h1v2h-1zM1419 389h1v3h-1zM1420 389h1v2h-1zM1421 389h1v3h-1zM1422 389h1v2h-1zM1423 389h1v2h-1zM1424 389h1v2h-1zM1425 389h1v4h-1zM1426 389h1v2h-1zM1427 389h1v2h-1zM1428 390h1v2h-1zM1429 390h1v2h-1zM1430 390h1v2h-1zM1431 390h1v2h-1zM1432 390h1v3h-1zM1433 390h1v2h-1zM1434 390h1v2h-1zM1435 389h1v3h-1zM1436 390h1v2h-1zM1437 390h1v2h-1zM1438 390h1v2h-1zM1439 390h1v3h-1zM1440 390h1v2h-1zM1441 390h1v3h-1zM1442 390h1v3h-1zM1443 390h1v2h-1zM1444 390h1v3h-1zM1445 390h1v2h-1zM1446 390h1v2h-1zM1447 390h1v3h-1zM1448 390h1v2h-1zM1449 390h1v3h-1zM1450 390h1v2h-1zM1451 390h1v2h-1zM1452 390h1v2h-1zM1453 390h1v3h-1zM1454 390h1v2h-1zM1455 390h1v2h-1zM1456 390h1v2h-1z" fill="#33ff33" shape-rendering="crispEdges"/>
<path d="M951 123H961L956.3 132Z" fill="#33ff33"/>
<path d="M443 382H451.2L454.5 391.4L451.2 400.8H443Z" fill="#33ff33"/>
<path d="M444.8 389.5L447.6 387.2V397" fill="none" stroke="#1c3a1c" stroke-width="1.3"/>
<path d="M1438.8 321.7H1452.6L1456.6 327.4L1452.6 333.1H1438.8Z" fill="#000" stroke="#33ff33" stroke-width="1.1"/>
<path d="M1441.2 322.6H1449.2M1445.2 322.6V331.5" stroke="#33ff33" stroke-width="1.2" fill="none"/>
<path d="M1457 327.4L1465 321.8V333Z" fill="#33ff33"/>
</svg>
<!-- plot texts -->
<div class="a g" style="left:483px;top:167px;font-size:15.2px">8,00 V</div>
<div class="a g" style="left:482px;top:600px;font-size:15.3px">-8,00 V</div>
<div class="a g" style="left:543px;top:600px;font-size:15.5px">Δ 16,00 V</div>
<div class="a" style="left:467px;top:632px;width:1.3px;height:15px;background:#f4f4f4"></div>
<div class="a" style="left:476px;top:632px;width:1.3px;height:15px;background:#f4f4f4"></div>
<div class="a w" style="left:495px;top:664px;font-size:15px">Vrms</div>
<div class="a w" style="left:453px;top:679px">CH1</div>
<div class="a w" style="left:494px;top:679px;font-size:14.4px">3,50 V</div>
<div class="a w" style="left:453px;top:694px">CH2</div>
<div class="a w" style="left:495px;top:694px">--</div>

<!-- channel cards -->
<div class="a" style="left:444px;top:752px;width:124px;height:82px;border-radius:7px;border:1.5px solid #3ef03e;background:radial-gradient(ellipse 95px 42px at 62px 0px,#3af03a 0%,#32b835 35%,#2f6a38 65%,#353845 100%)"></div>
<div class="a" style="left:449px;top:756px;width:20px;height:20px;border-radius:3.5px;background:#33ff33"></div>
<div class="a w" style="left:449px;top:782px">DC</div>
<div class="a w" style="left:483px;top:782px;font-size:14.9px">2 V/div</div>
<div class="a w" style="left:483px;top:798px;font-size:14.3px">0.0 divs</div>
<div class="a w" style="left:483px;top:814px;font-size:14.4px">1000.00 Hz</div>

<div class="a" style="left:569px;top:752px;width:124px;height:82px;border-radius:7px;border:1.5px solid #d0d2d6;background:#353845"></div>
<div class="a" style="left:574px;top:756px;width:21px;height:21px;border-radius:3px;border:1px solid #8a8c92"></div>
<div class="a" style="left:574px;top:757px;width:21px;text-align:center;font-size:14px;color:#8a8c92">2</div>
<div class="a" style="left:574px;top:782px;font-size:14px;color:#4a4a48">AC</div>
<div class="a" style="left:609px;top:782px;font-size:14.7px;color:#4a4a48">50 mV/div</div>
<div class="a" style="left:609px;top:798px;font-size:14.3px;color:#4a4a48">0.0 divs</div>
<div class="a" style="left:609px;top:814px;font-size:14px;color:#4a4a48">?</div>

<!-- timebase panel -->
<div class="a" style="left:1211px;top:732px;width:126px;height:103px;border:1px solid #b8bcc6;border-bottom:none;background:#454851"></div>
<div class="a" style="left:1213px;top:759px;width:122px;height:1.5px;background:#5a5e68"></div>
<div class="a" style="left:1214px;top:762px;width:120px;height:19px;background:#5f636e"></div>
<div class="a" style="left:1213px;top:783.5px;width:122px;height:1.5px;background:#5a5e68"></div>
<div class="a" style="left:1213px;top:808.5px;width:122px;height:1.5px;background:#5a5e68"></div>
<div class="a w" style="left:1221px;top:741px">M</div>
<div class="a w" style="left:1258px;top:741px;font-size:15px">200us /div</div>
<div class="a w" style="left:1221px;top:766px">T</div>
<div class="a w" style="left:1253px;top:766px">0.0 ns</div>
<div class="a w" style="left:1221px;top:792px">D</div>
<div class="a w" style="left:1255px;top:792px">5k</div>
<div class="a w" style="left:1221px;top:815px">S</div>
<div class="a w" style="left:1252px;top:815px;font-size:14.5px">(1.25MS/s)</div>

<!-- trigger panel -->
<div class="a" style="left:1337px;top:732px;width:128px;height:103px;background:#353845;border-left:1px solid #b8bcc6;border-top:1px solid #b8bcc6"></div>
<div class="a" style="left:1339px;top:734px;width:64px;height:23px;border:2px solid #e8e8e8;border-radius:5px"></div>
<div class="a" style="left:1339px;top:735px;width:64px;text-align:center;font-weight:bold;font-size:17.5px;color:#fff">Trigger</div>
<div class="a" style="left:1414px;top:734px;width:50px;height:23px;border:2px solid #e8e8e8;border-radius:5px"></div>
<div class="a" style="left:1414px;top:735px;width:50px;text-align:center;font-weight:bold;font-size:17.5px;color:#fff">Forza</div>
<div class="a" style="left:1343px;top:761px;width:16px;height:16px;border-radius:50%;background:#33ee33"></div>
<div class="a w" style="left:1395px;top:761px;font-size:14.3px">2,48 V</div>

<svg class="a" style="left:0;top:0" width="1474" height="844">
 <defs>
  <linearGradient id="btng" x1="0" y1="0" x2="0" y2="1">
   <stop offset="0" stop-color="#8a8a8a"/><stop offset="0.5" stop-color="#444"/><stop offset="0.8" stop-color="#2a2a2a"/><stop offset="1" stop-color="#3a3a3a"/>
  </linearGradient>
  <linearGradient id="homeg2" x1="0" y1="0" x2="0" y2="1">
   <stop offset="0" stop-color="#a0a0a0"/><stop offset="0.5" stop-color="#5a5a5a"/><stop offset="1" stop-color="#262626"/>
  </linearGradient>
 </defs>
 <!-- osc app icon -->
 <defs><clipPath id="rc"><rect x="459.8" y="60" width="10" height="22"/></clipPath><clipPath id="lc"><rect x="445" y="60" width="14.8" height="22"/></clipPath></defs>
 <circle cx="457" cy="70.7" r="6.6" fill="none" stroke="#f7a80d" stroke-width="5.2" clip-path="url(#lc)"/>
 <circle cx="457" cy="70.7" r="6.6" fill="none" stroke="#222427" stroke-width="5.2" clip-path="url(#rc)"/>
 <!-- osc title buttons -->
 <path d="M1397.5 68.4L1403 74L1408.5 68.4" stroke="#232629" stroke-width="1.3" fill="none"/>
 <path d="M1421.7 73.2L1427 67.7L1432.3 73.2" stroke="#232629" stroke-width="1.3" fill="none"/>
 <circle cx="1451" cy="70.6" r="9" fill="#232629"/>
 <path d="M1446.9 66.5L1455.1 74.7M1455.1 66.5L1446.9 74.7" stroke="#fff" stroke-width="1.1"/>
 <!-- timeline -->
 <path d="M638 103.5H1311" stroke="#c8c8c8" stroke-width="1.2"/>
 <path d="M638.5 96.5V110.5M1310.5 96.5V110.5" stroke="#c8c8c8" stroke-width="1.2"/>
 <rect x="973" y="93" width="3.2" height="3" fill="#ff00ff"/>
 <path d="M974.6 96V99" stroke="#ff00ff" stroke-width="1"/>
 <path d="M974.5 100V107" stroke="#ffc800" stroke-width="1"/>
 <!-- focus icon -->
 <g fill="none" stroke="#f4f4f4" stroke-width="2.4" stroke-linecap="round" stroke-linejoin="round">
  <path d="M1368.2 98V95.2Q1368.2 94 1369.4 94H1372.5"/>
  <path d="M1381.5 94H1384.6Q1385.8 94 1385.8 95.2V98"/>
  <path d="M1368.2 108V110.8Q1368.2 112 1369.4 112H1372.5"/>
  <path d="M1381.5 112H1384.6Q1385.8 112 1385.8 110.8V108"/>
 </g>
 <circle cx="1377" cy="102.9" r="2.7" fill="#f4f4f4"/>
 <!-- pause -->
 <rect x="1403.1" y="93" width="6.8" height="20" fill="#fa5a55"/>
 <rect x="1414" y="93" width="7" height="20" fill="#fa5a55"/>
 <!-- lightning -->
 <path d="M1443.5 93.8H1454.6L1447.9 100.8L1454.6 101.2L1439.6 112.2L1444.8 104.2H1439.3Z" fill="#eeeeee" stroke="#eeeeee" stroke-width="0.8" stroke-linejoin="round"/>
 <!-- button bar -->
 <path d="M1326 700H1440V731.5H1326A15.75 15.75 0 0 1 1326 700Z" fill="url(#btng)"/>
 <path d="M1345.4 700.5V731M1382.8 700.5V731" stroke="#151515" stroke-width="1"/>
 <circle cx="1443.2" cy="709.2" r="20.8" fill="url(#homeg2)"/>
 <!-- home big icon -->
 <path d="M1429.6 708L1443 695.3L1456.2 708" fill="none" stroke="#ececec" stroke-width="1.9"/>
 <path d="M1443 698.6L1432 709V722H1439.9V712.4H1445.8V722H1454.1V709Z" fill="#ececec"/>
 <rect x="1448.8" y="696" width="3" height="5.5" fill="#ececec"/>
 <circle cx="1443" cy="706" r="1.9" fill="#5a5a5a"/>
 <!-- home-reset icon -->
 <path d="M1337.5 708.2A10.6 10.6 0 1 0 1335 724.3" fill="none" stroke="#e0e0e0" stroke-width="1.4"/>
 <path d="M1319.5 716A9.8 9.8 0 0 0 1336 723.5L1335 721.2A8.2 8.2 0 0 1 1321.6 716Z" fill="#e0e0e0"/>
 <path d="M1333 721L1341 719.3L1339.5 727.8Z" fill="#e0e0e0"/>
 <path d="M1323.5 713.3L1329 707.6L1334.5 713.3M1325.2 711.8V718.5H1332.8V711.8M1327.8 718.5V714.6H1330.3V718.5" fill="none" stroke="#e8e8e8" stroke-width="1.3"/>
 <!-- save icon -->
 <path d="M1356.5 706H1372.5L1375 708.5V724.7Q1375 726.7 1373 726.7H1357Q1355 726.7 1355 724.7V708Q1355 706 1357 706Z" fill="#f2f2f2"/>
 <rect x="1359.4" y="706.9" width="12.2" height="5.1" rx="1" fill="#3a3a3a"/>
 <rect x="1368.3" y="707.9" width="2.1" height="3.1" fill="#f2f2f2"/>
 <rect x="1357.2" y="714.2" width="15.8" height="10.3" fill="#1e1e1e"/>
 <path d="M1359 716.5H1371.5M1359 719.5H1371.5M1359 722.5H1371.5" stroke="#b4cce6" stroke-width="1.1"/>
 <!-- swap icon -->
 <rect x="1391" y="714.9" width="9.3" height="9.3" fill="#202020" stroke="#f4f4f4" stroke-width="1.5"/>
 <rect x="1403.6" y="705.6" width="6" height="5" fill="none" stroke="#f0f0f0" stroke-width="1.2"/>
 <rect x="1407.7" y="708.6" width="5.8" height="4.6" fill="none" stroke="#f0f0f0" stroke-width="1.2"/>
 <path d="M1393.2 711.8Q1395 707.8 1399 707.6" fill="none" stroke="#f0f0f0" stroke-width="1.5"/>
 <path d="M1398.3 705.3L1401.6 707.8L1398.3 710.3Z" fill="#f0f0f0"/>
 <path d="M1411 716.3Q1409.5 720.3 1405.5 720.5" fill="none" stroke="#f0f0f0" stroke-width="1.5"/>
 <path d="M1406.3 718L1402.8 720.5L1406.3 723Z" fill="#f0f0f0"/>
 <!-- trigger edge icon -->
 <path d="M1369.1 776.5H1375.7L1383.7 762.3H1389.9" fill="none" stroke="#e4e4e4" stroke-width="1.1"/>
 <path d="M1375 769.8L1381.6 765.8L1381 773.2Z" fill="#d8d8d8"/>
 <!-- "1" glyphs -->
 <path d="M456.2 763.6L459.4 761.5V771" fill="none" stroke="#0a0a0a" stroke-width="1.35"/>
 <path d="M1348.6 766.4L1351.6 764.3V774" fill="none" stroke="#0a0a0a" stroke-width="1.35"/>
</svg>

</body></html>
